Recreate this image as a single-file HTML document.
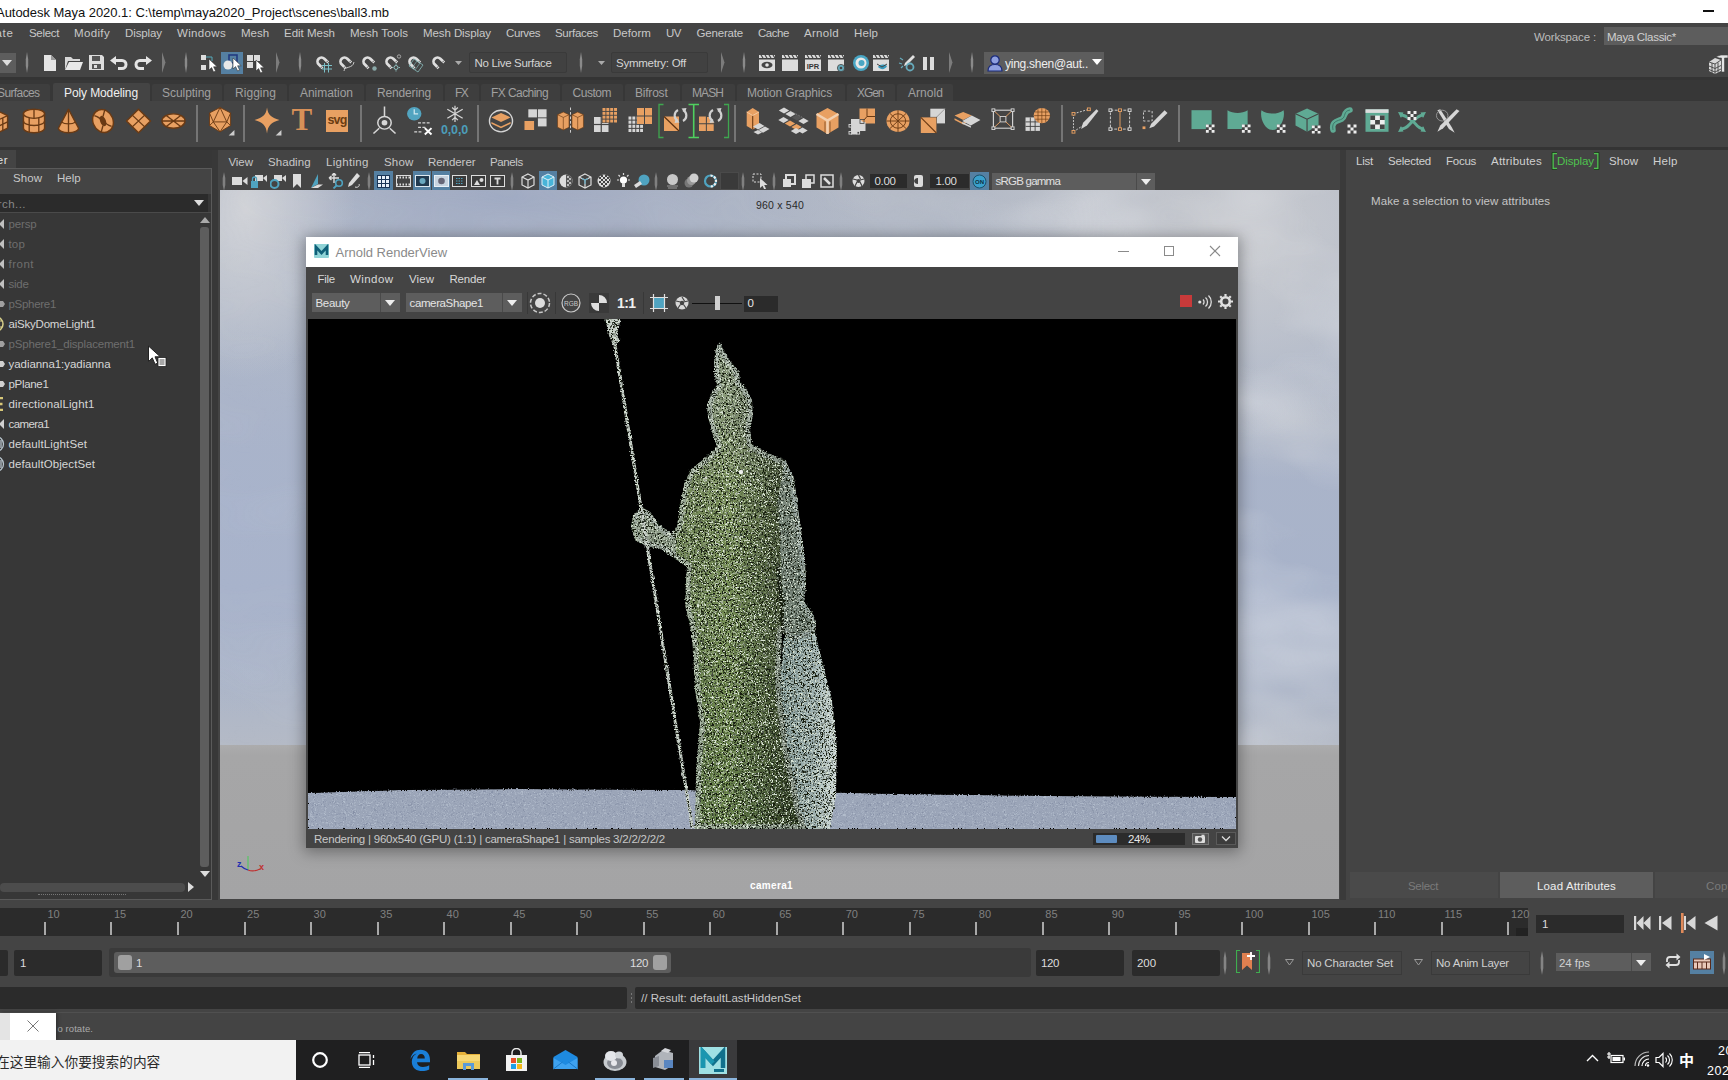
<!DOCTYPE html>
<html><head><meta charset="utf-8"><title>Autodesk Maya 2020.1</title>
<style>
html,body{margin:0;padding:0;}
body{width:1728px;height:1080px;position:relative;overflow:hidden;background:#444;font-family:"Liberation Sans","Noto Sans CJK SC",sans-serif;}
body div,body span,body svg{position:absolute;display:block;}
span{white-space:pre;}
</style></head><body>
<div style="left:0px;top:0px;width:1728px;height:23px;background:#fff;"></div>
<span style="left:-4px;top:3.5px;font-size:13px;line-height:17px;color:#111;letter-spacing:-0.037px;">Autodesk Maya 2020.1: C:\temp\maya2020_Project\scenes\ball3.mb</span>
<div style="left:1703px;top:10px;width:11px;height:1.5px;background:#111;"></div>
<div style="left:0px;top:23px;width:1728px;height:57px;background:#444;"></div>
<span style="left:-25px;top:26.0px;font-size:11.5px;line-height:15px;color:#c8c8c8;letter-spacing:0.664px;">Create</span>
<span style="left:29px;top:26.0px;font-size:11.5px;line-height:15px;color:#c8c8c8;letter-spacing:-0.327px;">Select</span>
<span style="left:74px;top:26.0px;font-size:11.5px;line-height:15px;color:#c8c8c8;letter-spacing:0.355px;">Modify</span>
<span style="left:125px;top:26.0px;font-size:11.5px;line-height:15px;color:#c8c8c8;letter-spacing:-0.101px;">Display</span>
<span style="left:177px;top:26.0px;font-size:11.5px;line-height:15px;color:#c8c8c8;letter-spacing:0.336px;">Windows</span>
<span style="left:241px;top:26.0px;font-size:11.5px;line-height:15px;color:#c8c8c8;letter-spacing:-0.030px;">Mesh</span>
<span style="left:284px;top:26.0px;font-size:11.5px;line-height:15px;color:#c8c8c8;letter-spacing:-0.015px;">Edit Mesh</span>
<span style="left:350px;top:26.0px;font-size:11.5px;line-height:15px;color:#c8c8c8;letter-spacing:0.005px;">Mesh Tools</span>
<span style="left:423px;top:26.0px;font-size:11.5px;line-height:15px;color:#c8c8c8;letter-spacing:-0.085px;">Mesh Display</span>
<span style="left:506px;top:26.0px;font-size:11.5px;line-height:15px;color:#c8c8c8;letter-spacing:-0.404px;">Curves</span>
<span style="left:555px;top:26.0px;font-size:11.5px;line-height:15px;color:#c8c8c8;letter-spacing:-0.298px;">Surfaces</span>
<span style="left:613px;top:26.0px;font-size:11.5px;line-height:15px;color:#c8c8c8;letter-spacing:0.050px;">Deform</span>
<span style="left:666px;top:26.0px;font-size:11.5px;line-height:15px;color:#c8c8c8;letter-spacing:-0.487px;">UV</span>
<span style="left:696.5px;top:26.0px;font-size:11.5px;line-height:15px;color:#c8c8c8;letter-spacing:-0.181px;">Generate</span>
<span style="left:758px;top:26.0px;font-size:11.5px;line-height:15px;color:#c8c8c8;letter-spacing:-0.448px;">Cache</span>
<span style="left:804px;top:26.0px;font-size:11.5px;line-height:15px;color:#c8c8c8;letter-spacing:0.293px;">Arnold</span>
<span style="left:854px;top:26.0px;font-size:11.5px;line-height:15px;color:#c8c8c8;letter-spacing:0.088px;">Help</span>
<span style="left:1534px;top:29.5px;font-size:11.5px;line-height:15px;color:#bbb;letter-spacing:-0.154px;">Workspace :</span>
<div style="left:1604px;top:27px;width:124px;height:18px;background:#5d5d5d;"></div>
<span style="left:1607px;top:29.5px;font-size:11.5px;line-height:15px;color:#d0d0d0;letter-spacing:-0.296px;">Maya Classic*</span>
<div style="left:0px;top:53px;width:16px;height:20px;background:#5d5d5d;"></div>
<svg style="left:2px;top:60px;" width="10" height="6" viewBox="0 0 10 6"><path d="M0 0h10l-5 6z" fill="#ddd"/></svg>
<svg style="left:25px;top:52px;" width="4" height="21" viewBox="0 0 4 21"><path d="M2 0 L3.2 7.35 L3.2 13.65 L2 21 L0.8 13.65 L0.8 7.35z" fill="#8a8a8a"/></svg>
<svg style="left:184px;top:52px;" width="4" height="21" viewBox="0 0 4 21"><path d="M2 0 L3.2 7.35 L3.2 13.65 L2 21 L0.8 13.65 L0.8 7.35z" fill="#8a8a8a"/></svg>
<svg style="left:298px;top:52px;" width="4" height="21" viewBox="0 0 4 21"><path d="M2 0 L3.2 7.35 L3.2 13.65 L2 21 L0.8 13.65 L0.8 7.35z" fill="#8a8a8a"/></svg>
<svg style="left:579px;top:52px;" width="4" height="21" viewBox="0 0 4 21"><path d="M2 0 L3.2 7.35 L3.2 13.65 L2 21 L0.8 13.65 L0.8 7.35z" fill="#8a8a8a"/></svg>
<svg style="left:742px;top:52px;" width="4" height="21" viewBox="0 0 4 21"><path d="M2 0 L3.2 7.35 L3.2 13.65 L2 21 L0.8 13.65 L0.8 7.35z" fill="#8a8a8a"/></svg>
<svg style="left:970px;top:52px;" width="4" height="21" viewBox="0 0 4 21"><path d="M2 0 L3.2 7.35 L3.2 13.65 L2 21 L0.8 13.65 L0.8 7.35z" fill="#8a8a8a"/></svg>
<svg style="left:161px;top:52px;" width="5" height="21" viewBox="0 0 5 21"><path d="M1 0 L4.5 10.5 L1 21 z" fill="#7c7c7c"/></svg>
<svg style="left:275px;top:52px;" width="5" height="21" viewBox="0 0 5 21"><path d="M1 0 L4.5 10.5 L1 21 z" fill="#7c7c7c"/></svg>
<svg style="left:720px;top:52px;" width="5" height="21" viewBox="0 0 5 21"><path d="M1 0 L4.5 10.5 L1 21 z" fill="#7c7c7c"/></svg>
<svg style="left:948px;top:52px;" width="5" height="21" viewBox="0 0 5 21"><path d="M1 0 L4.5 10.5 L1 21 z" fill="#7c7c7c"/></svg>
<svg style="left:44px;top:55px;" width="12" height="16" viewBox="0 0 12 16"><path d="M0 0h7l5 5v11h-12z" fill="#e4e4e4"/><path d="M7 0v5h5z" fill="#999"/></svg>
<svg style="left:65px;top:57px;" width="18" height="13" viewBox="0 0 18 13"><path d="M0 0h6l2 2h7v2h-12l-3 9z" fill="#d8d8d8"/><path d="M4 5h14l-3 8h-15z" fill="#e8e8e8"/></svg>
<svg style="left:89px;top:55px;" width="15" height="15" viewBox="0 0 15 15"><path d="M0 0h13l2 2v13h-15z" fill="#ddd"/><rect x="3" y="1" width="8" height="5" fill="#555"/><rect x="3" y="9" width="9" height="5" fill="#555"/><rect x="5" y="10" width="3" height="3" fill="#ddd"/></svg>
<svg style="left:110px;top:56px;" width="18" height="14" viewBox="0 0 18 14"><path d="M0 4.5L6 0v3h6a5.5 5.5 0 0 1 0 11h-4v-3h4a2.5 2.5 0 0 0 0-5h-6v3z" fill="#e4e4e4"/></svg>
<svg style="left:134px;top:56px;" width="18" height="14" viewBox="0 0 18 14"><path d="M18 4.5L12 0v3h-6a5.5 5.5 0 0 0 0 11h4v-3h-4a2.5 2.5 0 0 1 0-5h6v3z" fill="#e4e4e4"/></svg>
<svg style="left:200px;top:54px;" width="20" height="20" viewBox="0 0 20 20"><rect x="1" y="1" width="5" height="5" fill="#ddd"/><rect x="1" y="11" width="5" height="5" fill="#ddd"/><path d="M6 3h6v4" stroke="#5ab" fill="none"/><path transform="translate(9,5) scale(1.0)" d="M0 0v11l2.6-2.4 2 4.4 2-0.9-2-4.3h3.6z" fill="#fff" stroke="#333" stroke-width="0.6"/></svg>
<div style="left:221px;top:52px;width:22px;height:22px;background:#5580a2;"></div>
<svg style="left:222px;top:53px;" width="20" height="20" viewBox="0 0 20 20"><rect x="7" y="2" width="8" height="8" fill="none" stroke="#223a80" stroke-width="1.6"/><circle cx="6" cy="12" r="4.5" fill="#e8e8e8"/><path transform="translate(11,5) scale(1.0)" d="M0 0v11l2.6-2.4 2 4.4 2-0.9-2-4.3h3.6z" fill="#fff" stroke="#333" stroke-width="0.6"/></svg>
<svg style="left:247px;top:54px;" width="20" height="20" viewBox="0 0 20 20"><rect x="0" y="1" width="6" height="6" fill="#ddd"/><rect x="7" y="1" width="6" height="6" fill="#ddd"/><rect x="0" y="8" width="6" height="6" fill="#ddd"/><path transform="translate(9,6) scale(1.0)" d="M0 0v11l2.6-2.4 2 4.4 2-0.9-2-4.3h3.6z" fill="#fff" stroke="#333" stroke-width="0.6"/></svg>
<svg style="left:314px;top:52px;" width="24" height="24" viewBox="0 0 24 24"><g transform="translate(7.500,9.500) rotate(-45)"><path d="M-4 5.500V0A4 4 0 0 1 4 0V5.500" fill="none" stroke="#dedede" stroke-width="2.700"/><path d="M-5.350 4h2.700M2.650 4h2.700" stroke="#444" stroke-width="0.800"/></g><path d="M8 13.500h10M8 17h10M10.500 11v9.500M14.500 11v9.500" stroke="#7cc0c8" stroke-width="1"/></svg>
<svg style="left:337px;top:52px;" width="24" height="24" viewBox="0 0 24 24"><g transform="translate(7.500,9.500) rotate(-45)"><path d="M-4 5.500V0A4 4 0 0 1 4 0V5.500" fill="none" stroke="#dedede" stroke-width="2.700"/><path d="M-5.350 4h2.700M2.650 4h2.700" stroke="#444" stroke-width="0.800"/></g><path d="M7 19c0-5 9-2 10-9" stroke="#c8c8c8" stroke-width="1" fill="none"/></svg>
<svg style="left:360px;top:52px;" width="24" height="24" viewBox="0 0 24 24"><g transform="translate(7.500,9.500) rotate(-45)"><path d="M-4 5.500V0A4 4 0 0 1 4 0V5.500" fill="none" stroke="#dedede" stroke-width="2.700"/><path d="M-5.350 4h2.700M2.650 4h2.700" stroke="#444" stroke-width="0.800"/></g><circle cx="14.500" cy="16.500" r="2.200" fill="#8aa8a8"/></svg>
<svg style="left:383px;top:52px;" width="24" height="24" viewBox="0 0 24 24"><g transform="translate(7.500,9.500) rotate(-45)"><path d="M-4 5.500V0A4 4 0 0 1 4 0V5.500" fill="none" stroke="#dedede" stroke-width="2.700"/><path d="M-5.350 4h2.700M2.650 4h2.700" stroke="#444" stroke-width="0.800"/></g><circle cx="16" cy="4.500" r="1.700" fill="none" stroke="#bbb" stroke-width="0.800"/><circle cx="13" cy="15.500" r="2" fill="none" stroke="#9cc" stroke-width="0.900"/><path d="M13 11.500v1.300M13 18.200v1.300M9 15.500h1.300M15.700 15.500h1.300" stroke="#9cc" stroke-width="0.800"/></svg>
<svg style="left:406px;top:52px;" width="24" height="24" viewBox="0 0 24 24"><g transform="translate(7.500,9.500) rotate(-45)"><path d="M-4 5.500V0A4 4 0 0 1 4 0V5.500" fill="none" stroke="#dedede" stroke-width="2.700"/><path d="M-5.350 4h2.700M2.650 4h2.700" stroke="#444" stroke-width="0.800"/></g><path d="M8 7l9 6-5 7-9-6z" fill="none" stroke="#8bb" stroke-width="0.800"/><path d="M11 9l-5 7M14 11l-5 7" stroke="#8bb" stroke-width="0.600"/></svg>
<svg style="left:430px;top:52px;" width="24" height="24" viewBox="0 0 24 24"><g transform="translate(7.500,9.500) rotate(-45)"><path d="M-4 5.500V0A4 4 0 0 1 4 0V5.500" fill="none" stroke="#dedede" stroke-width="2.700"/><path d="M-5.350 4h2.700M2.650 4h2.700" stroke="#444" stroke-width="0.800"/></g></svg>
<svg style="left:455px;top:61px;" width="7" height="4" viewBox="0 0 7 4"><path d="M0 0h7l-3.500 4z" fill="#aaa"/></svg>
<div style="left:469px;top:52px;width:98px;height:21px;background:#414141;border:1px solid #3a3a3a;border-radius:2px;box-sizing:border-box;"></div>
<span style="left:474.5px;top:56.0px;font-size:11.5px;line-height:15px;color:#d4d4d4;letter-spacing:-0.321px;">No Live Surface</span>
<svg style="left:598px;top:61px;" width="7" height="4" viewBox="0 0 7 4"><path d="M0 0h7l-3.500 4z" fill="#aaa"/></svg>
<div style="left:611px;top:52px;width:97px;height:21px;background:#414141;border:1px solid #3a3a3a;border-radius:2px;box-sizing:border-box;"></div>
<span style="left:616px;top:56.0px;font-size:11.5px;line-height:15px;color:#d4d4d4;letter-spacing:-0.251px;">Symmetry: Off</span>
<svg style="left:759px;top:54px;" width="18" height="18" viewBox="0 0 18 18"><path d="M0 1h16v3h-16z" fill="#ddd"/><path d="M2 1l2 3M6 1l2 3M10 1l2 3M14 1l2 3" stroke="#444" stroke-width="1.2"/><rect x="0" y="5.500" width="16" height="11.500" fill="#dcdcdc"/><ellipse cx="8" cy="11" rx="5.500" ry="3.2" fill="#444"/><circle cx="8" cy="11" r="1.8" fill="#e4e4e4"/></svg>
<svg style="left:782px;top:54px;" width="18" height="18" viewBox="0 0 18 18"><path d="M0 1h16v3h-16z" fill="#ddd"/><path d="M2 1l2 3M6 1l2 3M10 1l2 3M14 1l2 3" stroke="#444" stroke-width="1.2"/><rect x="0" y="5.500" width="16" height="11.500" fill="#dcdcdc"/></svg>
<svg style="left:805px;top:54px;" width="18" height="18" viewBox="0 0 18 18"><path d="M0 1h16v3h-16z" fill="#ddd"/><path d="M2 1l2 3M6 1l2 3M10 1l2 3M14 1l2 3" stroke="#444" stroke-width="1.2"/><rect x="0" y="5.500" width="16" height="11.500" fill="#dcdcdc"/><text x="8" y="14.5" font-size="7.5" font-weight="700" text-anchor="middle" fill="#333" font-family="Liberation Sans,sans-serif">IPR</text></svg>
<svg style="left:828px;top:54px;" width="18" height="18" viewBox="0 0 18 18"><path d="M0 1h16v3h-16z" fill="#ddd"/><path d="M2 1l2 3M6 1l2 3M10 1l2 3M14 1l2 3" stroke="#444" stroke-width="1.2"/><rect x="0" y="5.500" width="16" height="11.500" fill="#dcdcdc"/><circle cx="13" cy="14" r="3.6" fill="#6ab" stroke="#444" stroke-width="0.8"/><circle cx="13" cy="14" r="1.3" fill="#444"/></svg>
<svg style="left:852px;top:54px;" width="18" height="18" viewBox="0 0 18 18"><circle cx="9" cy="9" r="8" fill="#49a6c4"/><circle cx="9" cy="9" r="5.500" fill="#e8e8e8"/><circle cx="9.5" cy="9" r="3" fill="#49a6c4"/></svg>
<svg style="left:873px;top:54px;" width="18" height="18" viewBox="0 0 18 18"><path d="M0 1h16v3h-16z" fill="#ddd"/><path d="M2 1l2 3M6 1l2 3M10 1l2 3M14 1l2 3" stroke="#444" stroke-width="1.2"/><rect x="0" y="5.500" width="16" height="11.500" fill="#dcdcdc"/><path d="M5 13c2-3 6-3 9-1-2 4-6 4-9 1z" fill="#3a9abc"/><path d="M4 10l5 3 5-3" stroke="#444" fill="none"/></svg>
<svg style="left:898px;top:54px;" width="18" height="18" viewBox="0 0 18 18"><path d="M15 1l2 2-8 8-3 1 1-3z" fill="#e0e0e0"/><circle cx="12" cy="13" r="3.500" fill="none" stroke="#6ab" stroke-width="1.8"/><path d="M1 9l3 1M3 14l2-2M2 4l3 2" stroke="#6ab" stroke-width="1.2"/></svg>
<div style="left:922.5px;top:56.5px;width:4px;height:13px;background:#dcdcdc;"></div>
<div style="left:929.5px;top:56.5px;width:4px;height:13px;background:#dcdcdc;"></div>
<div style="left:984px;top:52px;width:120px;height:22px;background:#5d5d5d;"></div>
<svg style="left:987px;top:54px;" width="16" height="18" viewBox="0 0 16 18"><circle cx="8" cy="6" r="4.2" fill="#8fa0e0" stroke="#1a2a7a" stroke-width="1.2"/><path d="M1 17c0-5 3.500-6.500 7-6.500s7 1.500 7 6.500z" fill="#8fa0e0" stroke="#1a2a7a" stroke-width="1.2"/></svg>
<span style="left:1005px;top:56.0px;font-size:12px;line-height:16px;color:#eee;letter-spacing:-0.260px;">ying.shen@aut..</span>
<svg style="left:1092px;top:59px;" width="10" height="6" viewBox="0 0 10 6"><path d="M0 0h10l-5 6z" fill="#fff"/></svg>
<svg style="left:1706px;top:53px;" width="22" height="22" viewBox="0 0 22 22"><path d="M3 9l6-4 6 2v11l-6 3-6-3z" fill="#d8d8d8"/><path d="M3 9l6 2 6-4M9 11v10M3 13l6 2.500 6-3M3 16.500l6 2.500 6-3M6 10v10M12 9.500v10" stroke="#444" stroke-width="0.900" fill="none"/><path d="M10 3.500l5-1.500h7v3h-3.500v14h-3v-14h-2.500z" fill="#e4e4e4" stroke="#444" stroke-width="0.600"/></svg>
<div style="left:0px;top:77px;width:1728px;height:3px;background:#343434;"></div>
<div style="left:0px;top:80px;width:1728px;height:21px;background:#373737;"></div>
<div style="left:-30px;top:84px;width:80px;height:17px;background:#3e3e3e;border-radius:2px 2px 0 0;"></div>
<span style="left:-3px;top:85.0px;font-size:12px;line-height:16px;color:#a0a0a0;letter-spacing:-0.607px;">Surfaces</span>
<div style="left:53px;top:83px;width:97px;height:18px;background:#444;border-radius:2px 2px 0 0;"></div>
<span style="left:64px;top:85.0px;font-size:12px;line-height:16px;color:#f0f0f0;letter-spacing:-0.106px;">Poly Modeling</span>
<div style="left:152px;top:84px;width:70px;height:17px;background:#3e3e3e;border-radius:2px 2px 0 0;"></div>
<span style="left:162px;top:85.0px;font-size:12px;line-height:16px;color:#a0a0a0;letter-spacing:-0.040px;">Sculpting</span>
<div style="left:224px;top:84px;width:63px;height:17px;background:#3e3e3e;border-radius:2px 2px 0 0;"></div>
<span style="left:235px;top:85.0px;font-size:12px;line-height:16px;color:#a0a0a0;letter-spacing:0.044px;">Rigging</span>
<div style="left:289px;top:84px;width:75px;height:17px;background:#3e3e3e;border-radius:2px 2px 0 0;"></div>
<span style="left:300px;top:85.0px;font-size:12px;line-height:16px;color:#a0a0a0;letter-spacing:-0.040px;">Animation</span>
<div style="left:366px;top:84px;width:77px;height:17px;background:#3e3e3e;border-radius:2px 2px 0 0;"></div>
<span style="left:377px;top:85.0px;font-size:12px;line-height:16px;color:#a0a0a0;letter-spacing:-0.152px;">Rendering</span>
<div style="left:445px;top:84px;width:34px;height:17px;background:#3e3e3e;border-radius:2px 2px 0 0;"></div>
<span style="left:455px;top:85.0px;font-size:12px;line-height:16px;color:#a0a0a0;letter-spacing:-1.667px;">FX</span>
<div style="left:481px;top:84px;width:79px;height:17px;background:#3e3e3e;border-radius:2px 2px 0 0;"></div>
<span style="left:491px;top:85.0px;font-size:12px;line-height:16px;color:#a0a0a0;letter-spacing:-0.569px;">FX Caching</span>
<div style="left:562px;top:84px;width:61px;height:17px;background:#3e3e3e;border-radius:2px 2px 0 0;"></div>
<span style="left:572.5px;top:85.0px;font-size:12px;line-height:16px;color:#a0a0a0;letter-spacing:-0.474px;">Custom</span>
<div style="left:625px;top:84px;width:55px;height:17px;background:#3e3e3e;border-radius:2px 2px 0 0;"></div>
<span style="left:635px;top:85.0px;font-size:12px;line-height:16px;color:#a0a0a0;letter-spacing:-0.216px;">Bifrost</span>
<div style="left:682px;top:84px;width:53px;height:17px;background:#3e3e3e;border-radius:2px 2px 0 0;"></div>
<span style="left:692px;top:85.0px;font-size:12px;line-height:16px;color:#a0a0a0;letter-spacing:-0.918px;">MASH</span>
<div style="left:737px;top:84px;width:108px;height:17px;background:#3e3e3e;border-radius:2px 2px 0 0;"></div>
<span style="left:747px;top:85.0px;font-size:12px;line-height:16px;color:#a0a0a0;letter-spacing:-0.158px;">Motion Graphics</span>
<div style="left:847px;top:84px;width:48px;height:17px;background:#3e3e3e;border-radius:2px 2px 0 0;"></div>
<span style="left:857px;top:85.0px;font-size:12px;line-height:16px;color:#a0a0a0;letter-spacing:-1.046px;">XGen</span>
<div style="left:897px;top:84px;width:56px;height:17px;background:#3e3e3e;border-radius:2px 2px 0 0;"></div>
<span style="left:908px;top:85.0px;font-size:12px;line-height:16px;color:#a0a0a0;letter-spacing:0.052px;">Arnold</span>
<div style="left:0px;top:101px;width:1728px;height:49px;background:#444;"></div>
<div style="left:0px;top:146.5px;width:1728px;height:3px;background:#343434;"></div>
<div style="left:196px;top:105px;width:2px;height:37px;background:#757575;"></div>
<div style="left:243px;top:105px;width:2px;height:37px;background:#757575;"></div>
<div style="left:360px;top:105px;width:2px;height:37px;background:#757575;"></div>
<div style="left:477px;top:105px;width:2px;height:37px;background:#757575;"></div>
<div style="left:734px;top:105px;width:2px;height:37px;background:#757575;"></div>
<div style="left:1061px;top:105px;width:2px;height:37px;background:#757575;"></div>
<div style="left:1178px;top:105px;width:2px;height:37px;background:#757575;"></div>
<svg style="left:-14px;top:104px;" width="24" height="36" viewBox="0 0 24 36"><g transform="translate(12.0,17) scale(0.96,0.9) translate(-12.0,-18)"><path d="M2 12l10-5 10 5v14l-10 5-10-5z" fill="#e8a062" stroke="#6a3a14" stroke-width="1.500" stroke-linejoin="round"/><path d="M2 12l10 5 10-5M12 17v14M7 14.500v14M17 14.500v14M2 19l10 5 10-5" stroke="#6a3a14" fill="none" stroke-width="1.400"/></g></svg>
<svg style="left:22px;top:104px;" width="24" height="36" viewBox="0 0 24 36"><g transform="translate(12.0,17) scale(0.96,0.9) translate(-12.0,-18)"><path d="M1 10a11 5 0 0 1 22 0v16a11 5 0 0 1-22 0z" fill="#e8a062" stroke="#6a3a14" stroke-width="1.500" stroke-linejoin="round"/><ellipse cx="12" cy="10" rx="11" ry="5" fill="#e8a062" stroke="#6a3a14" stroke-width="1.500" stroke-linejoin="round" stroke="#6a3a14"/><path d="M1 18a11 5 0 0 0 22 0M7 14.500v16M17 14.500v16M12 5v10" stroke="#6a3a14" fill="none" stroke-width="1.400"/></g></svg>
<svg style="left:57px;top:104px;" width="23" height="36" viewBox="0 0 23 36"><g transform="translate(11.5,17) scale(0.96,0.9) translate(-11.5,-18)"><path d="M11.500 5 L22 26a10.500 5 0 0 1-21 0z" fill="#e8a062" stroke="#6a3a14" stroke-width="1.500" stroke-linejoin="round"/><path d="M11.500 5v26M4 19c4 3 11 3 15 0" stroke="#6a3a14" fill="none" stroke-width="1.400"/></g></svg>
<svg style="left:91px;top:104px;" width="24" height="36" viewBox="0 0 24 36"><g transform="translate(12.0,17) scale(0.96,0.9) translate(-12.0,-18)"><ellipse cx="12" cy="18" rx="10.500" ry="13" fill="#e8a062" stroke="#6a3a14" stroke-width="1.500" stroke-linejoin="round" transform="rotate(-20 12 18)"/><ellipse cx="12" cy="18" rx="3" ry="6" fill="#6a3a14" transform="rotate(-20 12 18)"/><path d="M3 12c6 2 8 6 8 6M21 24c-6-2-8-6-8-6M14 5c-1 4-2 8-2 8M10 31c1-4 2-8 2-8" stroke="#6a3a14" fill="none" stroke-width="1.400"/></g></svg>
<svg style="left:125px;top:104px;" width="27" height="36" viewBox="0 0 27 36"><g transform="translate(13.5,17) scale(0.96,0.9) translate(-13.5,-18)"><path d="M13.500 5L26 18 13.500 31 1 18z" fill="#e8a062" stroke="#6a3a14" stroke-width="1.500" stroke-linejoin="round"/><path d="M7 11.500l13 13M20 11.500l-13 13" stroke="#6a3a14" fill="none" stroke-width="1.400"/></g></svg>
<svg style="left:161px;top:104px;" width="25" height="36" viewBox="0 0 25 36"><g transform="translate(12.5,17) scale(0.96,0.9) translate(-12.5,-18)"><ellipse cx="12.500" cy="18" rx="12" ry="8" fill="#e8a062" stroke="#6a3a14" stroke-width="1.500" stroke-linejoin="round"/><path d="M0.500 18h24M5 12l15 12M20 12l-15 12" stroke="#6a3a14" fill="none" stroke-width="1.400"/></g></svg>
<svg style="left:207px;top:104px;" width="28" height="36" viewBox="0 0 28 36"><g transform="translate(14.0,17) scale(0.96,0.9) translate(-14.0,-18)"><path d="M13 3l11 6v14l-11 7-11-7v-14z" fill="#e8a062" stroke="#6a3a14"/><path d="M13 3l-7 16h14zM2 9l4 10M24 9l-4 10M6 19l7 11 7-11M2 23l4-4M24 23l-4-4" stroke="#6a3a14" fill="none"/><path d="M28 28v6h-6z" fill="#ccc"/></g></svg>
<svg style="left:253px;top:104px;" width="29" height="36" viewBox="0 0 29 36"><g transform="translate(14.5,17) scale(0.96,0.9) translate(-14.5,-18)"><path d="M14 3c1 8 4 11 13 14-9 3-12 6-13 15-1-9-4-12-13-15 9-3 12-6 13-14z" fill="#e8a062"/><path d="M29 28v6h-6z" fill="#ccc"/></g></svg>
<span style="left:291.500px;top:100px;font-family:'Liberation Serif',serif;font-size:31px;line-height:40px;font-weight:700;color:#d89058;">T</span>
<div style="left:325.5px;top:109.5px;width:22.5px;height:22.5px;background:#e8a062;"></div>
<span style="left:327.5px;top:112.0px;font-size:12.5px;line-height:16px;color:#6b3d12;letter-spacing:-0.846px;font-weight:700;">svg</span>
<svg style="left:371px;top:104px;" width="27" height="36" viewBox="0 0 27 36"><g transform="translate(13.5,17) scale(0.96,0.9) translate(-13.5,-18)"><circle cx="13.500" cy="20" r="7" fill="none" stroke="#d6d6d6" stroke-width="1.600"/><circle cx="13.500" cy="20" r="3" fill="#d6d6d6"/><path d="M13.500 2v11M2 32l6-6M25 32l-6-6" stroke="#d6d6d6" stroke-width="1.600"/></g></svg>
<svg style="left:406px;top:104px;" width="28" height="36" viewBox="0 0 28 36"><g transform="translate(14.0,17) scale(0.96,0.9) translate(-14.0,-18)"><circle cx="8" cy="10" r="7.500" fill="#52a4c0"/><path d="M8 5v5h4" stroke="#cfe8f0" fill="none" stroke-width="1.300"/><path d="M12 20h12M12 25h8M8 30h8" stroke="#d6d6d6" stroke-width="1.400" stroke-dasharray="3 1.500"/><path d="M19 26l7 7M26 26l-7 7" stroke="#fff" stroke-width="2"/></g></svg>
<svg style="left:441px;top:104px;" width="28" height="36" viewBox="0 0 28 36"><g transform="translate(14.0,17) scale(0.96,0.9) translate(-14.0,-18)"><path d="M14 1v18M6 5l16 10M22 5l-16 10M11 3l3 3 3-3M11 17l3-3 3 3" stroke="#d6d6d6" stroke-width="1.300" fill="none"/></g></svg>
<span style="left:441px;top:121.5px;font-size:12.5px;line-height:16px;color:#4c9dba;letter-spacing:-0.160px;font-weight:700;">0,0,0</span>
<svg style="left:488px;top:104px;" width="26" height="36" viewBox="0 0 26 36"><g transform="translate(13.0,17) scale(0.96,0.9) translate(-13.0,-18)"><circle cx="13" cy="18" r="12" fill="none" stroke="#d6d6d6" stroke-width="1.500"/><path d="M13 9l10 5-10 5-10-5z" fill="#e8a062"/><path d="M3 19l10 5 10-5v2l-10 5-10-5z" fill="#e8a062"/></g></svg>
<svg style="left:524px;top:104px;" width="24" height="36" viewBox="0 0 24 36"><g transform="translate(12.0,17) scale(0.96,0.9) translate(-12.0,-18)"><rect x="4" y="5" width="9" height="9" fill="#d6d6d6"/><rect x="14" y="5" width="9" height="9" fill="#d6d6d6"/><rect x="14" y="15" width="9" height="9" fill="#d6d6d6"/><rect x="0" y="18" width="10" height="10" fill="#e8a062"/></g></svg>
<svg style="left:556px;top:104px;" width="29" height="36" viewBox="0 0 29 36"><g transform="translate(14.5,17) scale(0.96,0.9) translate(-14.5,-18)"><path d="M1 11l6-3 6 3v14l-6 3-6-3z" fill="#e8a062" stroke="#6a3a14" stroke-width="0.700"/><path d="M16 11l6-3 6 3v14l-6 3-6-3z" fill="#e8a062" stroke="#6a3a14" stroke-width="0.700"/><path d="M7 14v14M22 14v14M1 11l6 3 6-3M16 11l6 3 6-3" stroke="#6a3a14" stroke-width="0.700" fill="none"/><path d="M14.500 3v30" stroke="#d6d6d6" stroke-dasharray="3 2"/></g></svg>
<svg style="left:592px;top:102px;" width="28" height="42" viewBox="592 102 28 42"><rect x="594.00" y="117.00" width="6.65" height="6.90" fill="#d6d6d6"/><rect x="594.00" y="125.10" width="6.65" height="6.90" fill="#d6d6d6"/><rect x="601.85" y="117.00" width="6.65" height="6.90" fill="#d6d6d6"/><rect x="601.85" y="125.10" width="6.65" height="6.90" fill="#d6d6d6"/><rect x="602" y="107.500" width="15.500" height="15.500" fill="#444"/><rect x="602.50" y="108.00" width="2.95" height="2.95" fill="#e8a062"/><rect x="602.50" y="111.85" width="2.95" height="2.95" fill="#e8a062"/><rect x="602.50" y="115.70" width="2.95" height="2.95" fill="#e8a062"/><rect x="602.50" y="119.55" width="2.95" height="2.95" fill="#e8a062"/><rect x="606.35" y="108.00" width="2.95" height="2.95" fill="#e8a062"/><rect x="606.35" y="111.85" width="2.95" height="2.95" fill="#e8a062"/><rect x="606.35" y="115.70" width="2.95" height="2.95" fill="#e8a062"/><rect x="606.35" y="119.55" width="2.95" height="2.95" fill="#e8a062"/><rect x="610.20" y="108.00" width="2.95" height="2.95" fill="#e8a062"/><rect x="610.20" y="111.85" width="2.95" height="2.95" fill="#e8a062"/><rect x="610.20" y="115.70" width="2.95" height="2.95" fill="#e8a062"/><rect x="610.20" y="119.55" width="2.95" height="2.95" fill="#e8a062"/><rect x="614.05" y="108.00" width="2.95" height="2.95" fill="#e8a062"/><rect x="614.05" y="111.85" width="2.95" height="2.95" fill="#e8a062"/><rect x="614.05" y="115.70" width="2.95" height="2.95" fill="#e8a062"/><rect x="614.05" y="119.55" width="2.95" height="2.95" fill="#e8a062"/></svg>
<svg style="left:626px;top:102px;" width="29" height="42" viewBox="626 102 29 42"><rect x="628.50" y="116.50" width="2.88" height="3.12" fill="#d6d6d6"/><rect x="628.50" y="120.62" width="2.88" height="3.12" fill="#d6d6d6"/><rect x="628.50" y="124.75" width="2.88" height="3.12" fill="#d6d6d6"/><rect x="628.50" y="128.88" width="2.88" height="3.12" fill="#d6d6d6"/><rect x="632.38" y="116.50" width="2.88" height="3.12" fill="#d6d6d6"/><rect x="632.38" y="120.62" width="2.88" height="3.12" fill="#d6d6d6"/><rect x="632.38" y="124.75" width="2.88" height="3.12" fill="#d6d6d6"/><rect x="632.38" y="128.88" width="2.88" height="3.12" fill="#d6d6d6"/><rect x="636.25" y="116.50" width="2.88" height="3.12" fill="#d6d6d6"/><rect x="636.25" y="120.62" width="2.88" height="3.12" fill="#d6d6d6"/><rect x="636.25" y="124.75" width="2.88" height="3.12" fill="#d6d6d6"/><rect x="636.25" y="128.88" width="2.88" height="3.12" fill="#d6d6d6"/><rect x="640.12" y="116.50" width="2.88" height="3.12" fill="#d6d6d6"/><rect x="640.12" y="120.62" width="2.88" height="3.12" fill="#d6d6d6"/><rect x="640.12" y="124.75" width="2.88" height="3.12" fill="#d6d6d6"/><rect x="640.12" y="128.88" width="2.88" height="3.12" fill="#d6d6d6"/><rect x="636.500" y="107.500" width="16" height="17" fill="#444"/><rect x="637.00" y="108.00" width="7.00" height="7.50" fill="#e8a062"/><rect x="637.00" y="116.50" width="7.00" height="7.50" fill="#e8a062"/><rect x="645.00" y="108.00" width="7.00" height="7.50" fill="#e8a062"/><rect x="645.00" y="116.50" width="7.00" height="7.50" fill="#e8a062"/></svg>
<svg style="left:656px;top:102px;" width="76" height="42" viewBox="656 102 76 42"><path d="M663.500 104.500h-4.500v33h4.500" stroke="#3fa64f" fill="none" stroke-width="1.300"/><path d="M724 104.500h4.500v33h-4.500" stroke="#3fa64f" fill="none" stroke-width="1.300"/><path d="M688.500 104.500h10.500M688.500 137.500h10.500M693.700 104.500v33" stroke="#4fd05f" fill="none" stroke-width="1.600"/><rect x="664" y="116.500" width="15" height="14.500" fill="#e8a062"/><path d="M664 116.500l15 14.500" stroke="#5a3010" stroke-width="1.200"/><g transform="translate(680.5,115.5)" fill="none" stroke="#d0d0d0" stroke-width="2.200"><path d="M-2.500 -5.500A6.200 6.200 0 0 0 -2.500 5.500"/><path d="M2.500 5.500A6.200 6.200 0 0 0 2.500 -5.500"/></g><path d="M676.0 118.0l3.500 4.500-5 0.500zM685.0 113.0l-3.500 -4.500 5 -0.500z" fill="#d0d0d0"/><rect x="699.00" y="116.50" width="6.85" height="6.75" fill="#e8a062"/><rect x="699.00" y="124.25" width="6.85" height="6.75" fill="#e8a062"/><rect x="706.85" y="116.50" width="6.85" height="6.75" fill="#e8a062"/><rect x="706.85" y="124.25" width="6.85" height="6.75" fill="#e8a062"/><rect x="706.500" y="108" width="12" height="14" fill="#444"/><rect x="707" y="117" width="3" height="5.500" fill="#e8a062"/><g transform="translate(715.5,115.5)" fill="none" stroke="#d0d0d0" stroke-width="2.200"><path d="M-2.500 -5.500A6.200 6.200 0 0 0 -2.500 5.500"/><path d="M2.500 5.500A6.200 6.200 0 0 0 2.500 -5.500"/></g><path d="M711.0 118.0l3.500 4.500-5 0.500zM720.0 113.0l-3.500 -4.500 5 -0.500z" fill="#d0d0d0"/></svg>
<svg style="left:744px;top:102px;" width="28" height="42" viewBox="744 102 28 42"><path d="M746.700 112l6-4 6.300 4v14l-6.300 3.500-6-3.500z" fill="#e8a062"/><path d="M752.700 115.500v14" stroke="#6a3a14" stroke-width="1.100"/><path d="M746.700 112l6 3.500 6.300-3.500" stroke="#f4c8a0" stroke-width="1" fill="none"/><path d="M759.500 123l5 3-6.500 3.500-5-3z" fill="#d6d6d6"/><path d="M765 126.500l4.500 2.500-6.500 3.800-4.500-2.800z" fill="#d6d6d6"/><path d="M758 130l4 2.500-4 2-4.500-2.500z" fill="#d6d6d6"/></svg>
<svg style="left:776px;top:102px;" width="34" height="42" viewBox="776 102 34 42"><path d="M784 107.6l5.2 2.9-5.2 2.9-5.2-2.9z" fill="#d6d6d6"/><path d="M790.5 111.1l5.2 2.9-5.2 2.9-5.2-2.9z" fill="#d6d6d6"/><path d="M783.5 117.1l5.2 2.9-5.2 2.9-5.2-2.9z" fill="#d6d6d6"/><path d="M797 114.6l5.2 2.9-5.2 2.9-5.2-2.9z" fill="#555"/><path d="M790 120.6l5.2 2.9-5.2 2.9-5.2-2.9z" fill="#e8a062"/><path d="M796.5 124.1l5.2 2.9-5.2 2.9-5.2-2.9z" fill="#e8a062"/><path d="M803.5 118.1l5.2 2.9-5.2 2.9-5.2-2.9z" fill="#d6d6d6"/><path d="M796 128.1l5.2 2.9-5.2 2.9-5.2-2.9z" fill="#d6d6d6"/><path d="M802.5 127.6l5.2 2.9-5.2 2.9-5.2-2.9z" fill="#d6d6d6"/><path d="M790.500 111l13 7" stroke="#888" stroke-width="0.800" stroke-dasharray="1.500 1.500"/></svg>
<svg style="left:814px;top:102px;" width="28" height="42" viewBox="814 102 28 42"><path d="M827.500 108l11 6v13.500l-11 6.500-11-6.500v-13.500z" fill="#e8a062"/><path d="M816.500 114l11 6.500 11-6.500M827.500 120.500v13.500" stroke="#f2d0b0" stroke-width="2.600" fill="none"/><path d="M825 121.500v11M830 121.500v11" stroke="#6a3a14" stroke-width="0.700"/></svg>
<svg style="left:846px;top:102px;" width="32" height="42" viewBox="846 102 32 42"><rect x="859.500" y="108.500" width="15.500" height="15" fill="#e8a062"/><path d="M867 108.500v8h8M867 116.500l-3 3.500" stroke="#6a3a14" stroke-width="1" fill="none"/><path d="M851 119h9l3 3h2.500v9h-8.500v3.500h-6z" fill="#d6d6d6"/><rect x="860" y="119.500" width="4" height="4" fill="none" stroke="#444" stroke-width="0.800"/><g fill="#444" stroke="#d6d6d6" stroke-width="0.900"><rect x="849" y="124.500" width="2.600" height="2.600"/><rect x="849" y="131.500" width="2.600" height="2.600"/><rect x="857" y="131.500" width="2.600" height="2.600"/></g></svg>
<svg style="left:885px;top:104px;" width="26" height="36" viewBox="0 0 26 36"><g transform="translate(13.0,17) scale(0.96,0.9) translate(-13.0,-18)"><circle cx="13" cy="18" r="12" fill="#e8a062"/><circle cx="13" cy="18" r="8" fill="none" stroke="#6a3a14"/><path d="M13 6v24M1 18h24M4.500 9.500l17 17M21.500 9.500l-17 17" stroke="#6a3a14"/></g></svg>
<svg style="left:918px;top:102px;" width="30" height="42" viewBox="918 102 30 42"><rect x="930.300" y="108.700" width="14.700" height="14.700" fill="#d6d6d6"/><path d="M930.300 123.400l14.700-14.700" stroke="#888" stroke-width="0.800"/><rect x="920.300" y="116.900" width="16.600" height="16.600" fill="#444"/><rect x="920.800" y="117.400" width="15.600" height="15.600" fill="#e8a062"/><path d="M920.800 117.400l15.600 15.600" stroke="#6a3a14" stroke-width="1.100"/></svg>
<svg style="left:953px;top:104px;" width="29" height="36" viewBox="0 0 29 36"><g transform="translate(14.5,17) scale(0.96,0.9) translate(-14.5,-18)"><path d="M10 8l9 4-9 5-9-5z" fill="#e8a062"/><path d="M1 15l9 5 9-5v2l-9 5-9-5z" fill="#e8a062"/><path d="M19 12l9 5-10 6-9-5z" fill="#d6d6d6"/><path d="M9 19l9 4.500v2l-9-4.500z" fill="#d6d6d6"/></g></svg>
<svg style="left:991px;top:104px;" width="24" height="36" viewBox="0 0 24 36"><g transform="translate(12.0,17) scale(0.96,0.9) translate(-12.0,-18)"><rect x="2" y="6" width="20" height="20" fill="none" stroke="#d6d6d6" stroke-width="1.200"/><rect x="9" y="13" width="6" height="6" fill="none" stroke="#d6d6d6"/><path d="M2 6l7 7M22 6l-7 7M2 26l7-7M22 26l-7-7" stroke="#e8a062"/><g fill="#444" stroke="#d6d6d6"><rect x="0.500" y="4.500" width="3" height="3"/><rect x="20.500" y="4.500" width="3" height="3"/><rect x="0.500" y="24.500" width="3" height="3"/><rect x="20.500" y="24.500" width="3" height="3"/></g></g></svg>
<svg style="left:1025px;top:104px;" width="26" height="36" viewBox="0 0 26 36"><g transform="translate(13.0,17) scale(0.96,0.9) translate(-13.0,-18)"><rect x="0" y="14" width="15" height="15" fill="#d6d6d6"/><path d="M0 19h15M0 24h15M5 14v15M10 14v15" stroke="#444"/><circle cx="17" cy="12" r="8.500" fill="#e8a062"/><path d="M9 12h17M17 3.500v17M13 5v14M21 5v14M10 8h14M10 16h14" stroke="#6a3a14" stroke-width="0.700"/></g></svg>
<svg style="left:1071px;top:104px;" width="28" height="36" viewBox="0 0 28 36"><g transform="translate(14.0,17) scale(0.96,0.9) translate(-14.0,-18)"><path d="M2 10l16-5M2 10v20M2 30l10-7" stroke="#d6d6d6" fill="none" stroke-dasharray="2 1.500"/><path d="M26 5l2 2-12 16-6 4 2-7z" fill="#d6d6d6"/><g fill="#444" stroke="#e8a062"><rect x="0.500" y="8.500" width="3" height="3"/><rect x="16.500" y="3.500" width="3" height="3"/><rect x="0.500" y="28.500" width="3" height="3"/></g></g></svg>
<svg style="left:1108px;top:104px;" width="24" height="36" viewBox="0 0 24 36"><g transform="translate(12.0,17) scale(0.96,0.9) translate(-12.0,-18)"><rect x="2" y="6" width="20" height="21" fill="none" stroke="#d6d6d6" stroke-dasharray="3 1.500"/><path d="M12 6v21" stroke="#e8a062"/><g fill="#444" stroke="#d6d6d6"><rect x="0.500" y="4.500" width="3" height="3"/><rect x="20.500" y="4.500" width="3" height="3"/><rect x="0.500" y="25.500" width="3" height="3"/><rect x="20.500" y="25.500" width="3" height="3"/></g><g fill="#444" stroke="#e8a062"><rect x="10.500" y="4.500" width="3" height="3"/><rect x="10.500" y="25.500" width="3" height="3"/></g></g></svg>
<svg style="left:1141px;top:104px;" width="29" height="36" viewBox="0 0 29 36"><g transform="translate(14.5,17) scale(0.96,0.9) translate(-14.5,-18)"><path d="M2 7h9v11h-9z" fill="none" stroke="#d6d6d6" stroke-dasharray="2.500 2"/><path d="M24 6l3 3-14 15-5 2 2-5z" fill="#d6d6d6"/><rect x="1" y="24" width="3" height="3" fill="#e8a062"/></g></svg>
<svg style="left:1190px;top:104px;" width="26" height="36" viewBox="0 0 26 36"><g transform="translate(13.0,17) scale(0.96,0.9) translate(-13.0,-18)"><rect x="1" y="6" width="21" height="21" fill="#5faa94"/><g transform="translate(16,22)"><rect width="9" height="9" fill="#444"/><path d="M0 0h3v3h-3zM6 0h3v3h-3zM3 3h3v3h-3zM0 6h3v3h-3zM6 6h3v3h-3z" fill="#eee"/></g></g></svg>
<svg style="left:1226px;top:104px;" width="26" height="36" viewBox="0 0 26 36"><g transform="translate(13.0,17) scale(0.96,0.9) translate(-13.0,-18)"><path d="M1 6c6 4 15 4 21 0v21h-21z" fill="#5faa94"/><g transform="translate(16,22)"><rect width="9" height="9" fill="#444"/><path d="M0 0h3v3h-3zM6 0h3v3h-3zM3 3h3v3h-3zM0 6h3v3h-3zM6 6h3v3h-3z" fill="#eee"/></g></g></svg>
<svg style="left:1259px;top:104px;" width="28" height="36" viewBox="0 0 28 36"><g transform="translate(14.0,17) scale(0.96,0.9) translate(-14.0,-18)"><path d="M2 6c6 5 17 5 23 0c2 8-3 22-11.500 22s-13.500-14-11.500-22z" fill="#5faa94"/><g transform="translate(18,22)"><rect width="9" height="9" fill="#444"/><path d="M0 0h3v3h-3zM6 0h3v3h-3zM3 3h3v3h-3zM0 6h3v3h-3zM6 6h3v3h-3z" fill="#eee"/></g></g></svg>
<svg style="left:1294px;top:104px;" width="28" height="36" viewBox="0 0 28 36"><g transform="translate(14.0,17) scale(0.96,0.9) translate(-14.0,-18)"><path d="M13 4l12 6v13l-12 7-12-7v-13z" fill="#5faa94"/><path d="M1 10l12 6 12-6M13 16v14" stroke="#444" stroke-width="1.200" fill="none"/><g transform="translate(18,23)"><rect width="9" height="9" fill="#444"/><path d="M0 0h3v3h-3zM6 0h3v3h-3zM3 3h3v3h-3zM0 6h3v3h-3zM6 6h3v3h-3z" fill="#eee"/></g></g></svg>
<svg style="left:1328px;top:102px;" width="32" height="42" viewBox="1328 102 32 42"><path d="M1333 130c-2-9 5-9 9-11s1-8 8-9" stroke="#5faa94" stroke-width="5.500" fill="none" stroke-linecap="round"/><path d="M1333 130c-2-9 5-9 9-11s1-8 8-9" stroke="#3c7a6a" stroke-width="1" fill="none"/><g transform="translate(1347.5,124.5)"><rect width="9" height="9" fill="#444"/><path d="M0 0h3v3h-3zM6 0h3v3h-3zM3 3h3v3h-3zM0 6h3v3h-3zM6 6h3v3h-3z" fill="#eee"/></g></svg>
<svg style="left:1365px;top:104px;" width="25" height="36" viewBox="0 0 25 36"><g transform="translate(12.5,17) scale(0.96,0.9) translate(-12.5,-18)"><rect x="0" y="5" width="24" height="25" fill="#5faa94"/><rect x="0" y="5" width="24" height="4" fill="#ddd"/><g transform="translate(5,12)"><rect width="15" height="15" fill="#eee"/><path d="M0 0h5v5h-5zM10 0h5v5h-5zM5 5h5v5h-5zM0 10h5v5h-5zM10 10h5v5h-5z" fill="#444"/></g></g></svg>
<svg style="left:1396px;top:102px;" width="32" height="42" viewBox="1396 102 32 42"><path d="M1400 115c8 0 9 5 12 6s4-6 12-6M1400 129c8 0 9-5 12-7s4 7 12 7" stroke="#5faa94" stroke-width="3" fill="none"/><path d="M1398 112l5.500 0.500-2.500 5.500zM1426 112l-5.500 0.500 2.500 5.500zM1398 132l5.500-0.500-2.500-5.500zM1426 132l-5.500-0.500 2.500-5.500z" fill="#5faa94"/><g transform="translate(1407.5,111)"><rect width="9" height="9" fill="#444"/><path d="M0 0h3v3h-3zM6 0h3v3h-3zM3 3h3v3h-3zM0 6h3v3h-3zM6 6h3v3h-3z" fill="#eee"/></g></svg>
<svg style="left:1433px;top:104px;" width="28" height="36" viewBox="0 0 28 36"><g transform="translate(14.0,17) scale(0.96,0.9) translate(-14.0,-18)"><path d="M24 5l3 2-17 19-6 4 3-7z" fill="#d6d6d6"/><path d="M4 6l3-1 12 20 3 6-6-4z" fill="#d6d6d6"/><circle cx="9" cy="12" r="6" fill="none" stroke="#999"/></g></svg>
<div style="left:0px;top:150px;width:212px;height:750px;background:#373737;"></div>
<div style="left:0px;top:150px;width:16px;height:18px;background:#444;"></div>
<span style="left:-36px;top:152.5px;font-size:11.5px;line-height:15px;color:#e0e0e0;letter-spacing:0.467px;">Outliner</span>
<div style="left:0px;top:168px;width:212px;height:1px;background:#5a5a5a;"></div>
<div style="left:0px;top:169px;width:211px;height:25px;background:#444;"></div>
<div style="left:211px;top:168px;width:1px;height:732px;background:#5a5a5a;"></div>
<div style="left:0px;top:899px;width:212px;height:1px;background:#5a5a5a;"></div>
<span style="left:13px;top:171.0px;font-size:11.5px;line-height:15px;color:#c8c8c8;letter-spacing:0.059px;">Show</span>
<span style="left:57px;top:171.0px;font-size:11.5px;line-height:15px;color:#c8c8c8;letter-spacing:-0.037px;">Help</span>
<div style="left:0px;top:194px;width:208px;height:18px;background:#2b2b2b;"></div>
<span style="left:-24px;top:196.5px;font-size:11.5px;line-height:15px;color:#888;letter-spacing:0.442px;">Search...</span>
<svg style="left:194px;top:200px;" width="10" height="6" viewBox="0 0 10 6"><path d="M0 0h10l-5 6z" fill="#ddd"/></svg>
<div style="left:0px;top:212px;width:211px;height:1px;background:#4a4a4a;"></div>
<span style="left:8.5px;top:216.5px;font-size:11.5px;line-height:15px;color:#6e6e6e;letter-spacing:-0.153px;">persp</span>
<svg style="left:0px;top:219px;" width="5" height="10" viewBox="0 0 5 10"><path d="M4 0v10L-1 5z" fill="#c0c0c0"/></svg>
<span style="left:8.5px;top:236.5px;font-size:11.5px;line-height:15px;color:#6e6e6e;letter-spacing:0.171px;">top</span>
<svg style="left:0px;top:239px;" width="5" height="10" viewBox="0 0 5 10"><path d="M4 0v10L-1 5z" fill="#c0c0c0"/></svg>
<span style="left:8.5px;top:256.5px;font-size:11.5px;line-height:15px;color:#6e6e6e;letter-spacing:0.498px;">front</span>
<svg style="left:0px;top:259px;" width="5" height="10" viewBox="0 0 5 10"><path d="M4 0v10L-1 5z" fill="#c0c0c0"/></svg>
<span style="left:8.5px;top:276.5px;font-size:11.5px;line-height:15px;color:#6e6e6e;letter-spacing:-0.274px;">side</span>
<svg style="left:0px;top:279px;" width="5" height="10" viewBox="0 0 5 10"><path d="M4 0v10L-1 5z" fill="#c0c0c0"/></svg>
<span style="left:8.5px;top:296.5px;font-size:11.5px;line-height:15px;color:#6e6e6e;letter-spacing:-0.296px;">pSphere1</span>
<svg style="left:0px;top:300px;" width="5" height="8" viewBox="0 0 5 8"><path d="M0 1l3 0 2 3-2 3h-3z" fill="#a0a0a0"/></svg>
<span style="left:8.5px;top:316.5px;font-size:11.5px;line-height:15px;color:#d6d6d6;letter-spacing:-0.208px;">aiSkyDomeLight1</span>
<svg style="left:0px;top:316px;" width="4" height="16" viewBox="0 0 4 16"><circle cx="-4" cy="8" r="7" fill="none" stroke="#d8d08a" stroke-width="1.500"/><path d="M-4 5h6M-4 11h6" stroke="#d8d08a"/></svg>
<span style="left:8.5px;top:336.5px;font-size:11.5px;line-height:15px;color:#6e6e6e;letter-spacing:-0.178px;">pSphere1_displacement1</span>
<svg style="left:0px;top:340px;" width="5" height="8" viewBox="0 0 5 8"><path d="M0 1l3 0 2 3-2 3h-3z" fill="#a0a0a0"/></svg>
<span style="left:8.5px;top:356.5px;font-size:11.5px;line-height:15px;color:#d6d6d6;letter-spacing:-0.052px;">yadianna1:yadianna</span>
<svg style="left:0px;top:360px;" width="5" height="8" viewBox="0 0 5 8"><path d="M0 1l3 0 2 3-2 3h-3z" fill="#d0d0d0"/></svg>
<span style="left:8.5px;top:376.5px;font-size:11.5px;line-height:15px;color:#d6d6d6;letter-spacing:-0.315px;">pPlane1</span>
<svg style="left:0px;top:380px;" width="5" height="8" viewBox="0 0 5 8"><path d="M0 1l3 0 2 3-2 3h-3z" fill="#d0d0d0"/></svg>
<span style="left:8.5px;top:396.5px;font-size:11.5px;line-height:15px;color:#d6d6d6;letter-spacing:0.133px;">directionalLight1</span>
<svg style="left:0px;top:397px;" width="4" height="14" viewBox="0 0 4 14"><path d="M0 1h3M0 7h2.500M0 13h3" stroke="#d8c878" stroke-width="2.500"/></svg>
<span style="left:8.5px;top:416.5px;font-size:11.5px;line-height:15px;color:#d6d6d6;letter-spacing:-0.606px;">camera1</span>
<svg style="left:0px;top:419px;" width="5" height="10" viewBox="0 0 5 10"><path d="M4 0v10L-1 5z" fill="#d0d0d0"/></svg>
<span style="left:8.5px;top:436.5px;font-size:11.5px;line-height:15px;color:#d6d6d6;letter-spacing:0.118px;">defaultLightSet</span>
<svg style="left:0px;top:436px;" width="5" height="16" viewBox="0 0 5 16"><circle cx="-4" cy="8" r="7.500" fill="none" stroke="#b8c4cc" stroke-width="1.300"/><path d="M1 4v8" stroke="#b8c4cc" stroke-width="1.300"/></svg>
<span style="left:8.5px;top:456.5px;font-size:11.5px;line-height:15px;color:#d6d6d6;letter-spacing:0.092px;">defaultObjectSet</span>
<svg style="left:0px;top:456px;" width="5" height="16" viewBox="0 0 5 16"><circle cx="-4" cy="8" r="7.500" fill="none" stroke="#b8c4cc" stroke-width="1.300"/><path d="M1 4v8" stroke="#b8c4cc" stroke-width="1.300"/></svg>
<div style="left:200px;top:227px;width:9px;height:640px;background:#5d5d5d;border-radius:3px;"></div>
<svg style="left:199.5px;top:217px;" width="10" height="6" viewBox="0 0 10 6"><path d="M0 6h10l-5-6z" fill="#aaa"/></svg>
<svg style="left:199.5px;top:871px;" width="10" height="6" viewBox="0 0 10 6"><path d="M0 0h10l-5 6z" fill="#ddd"/></svg>
<div style="left:0px;top:883px;width:185px;height:9px;background:#4c4c4c;border-radius:4px;"></div>
<svg style="left:188px;top:882px;" width="6" height="10" viewBox="0 0 6 10"><path d="M0 0v10l6-5z" fill="#ddd"/></svg>
<div style="left:38px;top:894px;width:88px;height:1px;background:transparent;border-top:1px dotted #777;"></div>
<svg style="left:147px;top:345px;" width="22" height="24" viewBox="0 0 22 24"><path d="M1.500 1v15.500l3.800-3.600 2.800 6.400 2.700-1.200-2.800-6.300h5.300z" fill="#fff" stroke="#222" stroke-width="1"/><rect x="11" y="12.500" width="8" height="9" fill="#fff" stroke="#222" stroke-width="0.800"/><path d="M12.500 15h5M12.500 17h5M12.500 19h5" stroke="#222" stroke-width="0.800"/></svg>
<div style="left:212px;top:150px;width:6px;height:750px;background:#383838;"></div>
<div style="left:218px;top:150px;width:1123px;height:750px;background:#444;"></div>
<span style="left:228.4px;top:154.5px;font-size:11.5px;line-height:15px;color:#c8c8c8;letter-spacing:-0.029px;">View</span>
<span style="left:268px;top:154.5px;font-size:11.5px;line-height:15px;color:#c8c8c8;letter-spacing:0.057px;">Shading</span>
<span style="left:326px;top:154.5px;font-size:11.5px;line-height:15px;color:#c8c8c8;letter-spacing:0.302px;">Lighting</span>
<span style="left:384px;top:154.5px;font-size:11.5px;line-height:15px;color:#c8c8c8;letter-spacing:0.184px;">Show</span>
<span style="left:428px;top:154.5px;font-size:11.5px;line-height:15px;color:#c8c8c8;letter-spacing:-0.055px;">Renderer</span>
<span style="left:490px;top:154.5px;font-size:11.5px;line-height:15px;color:#c8c8c8;letter-spacing:-0.393px;">Panels</span>
<svg style="left:222px;top:172px;" width="4" height="19" viewBox="0 0 4 19"><path d="M2 0 L3.300 6 L3.300 13 L2 19 L0.700 13 L0.700 6z" fill="#808080"/></svg>
<svg style="left:366.5px;top:172px;" width="4" height="19" viewBox="0 0 4 19"><path d="M2 0 L3.300 6 L3.300 13 L2 19 L0.700 13 L0.700 6z" fill="#808080"/></svg>
<svg style="left:510px;top:172px;" width="4" height="19" viewBox="0 0 4 19"><path d="M2 0 L3.300 6 L3.300 13 L2 19 L0.700 13 L0.700 6z" fill="#808080"/></svg>
<svg style="left:654px;top:172px;" width="4" height="19" viewBox="0 0 4 19"><path d="M2 0 L3.300 6 L3.300 13 L2 19 L0.700 13 L0.700 6z" fill="#808080"/></svg>
<svg style="left:741px;top:172px;" width="4" height="19" viewBox="0 0 4 19"><path d="M2 0 L3.300 6 L3.300 13 L2 19 L0.700 13 L0.700 6z" fill="#808080"/></svg>
<svg style="left:771.5px;top:172px;" width="4" height="19" viewBox="0 0 4 19"><path d="M2 0 L3.300 6 L3.300 13 L2 19 L0.700 13 L0.700 6z" fill="#808080"/></svg>
<svg style="left:839px;top:172px;" width="4" height="19" viewBox="0 0 4 19"><path d="M2 0 L3.300 6 L3.300 13 L2 19 L0.700 13 L0.700 6z" fill="#808080"/></svg>
<svg style="left:232px;top:173px;" width="16" height="16" viewBox="0 0 16 16"><rect x="0" y="4" width="10" height="8" fill="#dcdcdc"/><path d="M10.500 8l5-4v8z" fill="#dcdcdc"/></svg>
<svg style="left:251px;top:173px;" width="16" height="16" viewBox="0 0 16 16"><rect x="4" y="2" width="8" height="6" fill="#dcdcdc"/><path d="M12 5l4-3v7z" fill="#dcdcdc"/><rect x="0" y="8" width="7" height="7" fill="#4fa3c0"/><path d="M1.500 8v-2a2 2 0 0 1 4 0v2" stroke="#4fa3c0" fill="none" stroke-width="1.300"/></svg>
<svg style="left:270px;top:173px;" width="16" height="16" viewBox="0 0 16 16"><rect x="4" y="2" width="8" height="6" fill="#dcdcdc"/><path d="M12 5l4-3v7z" fill="#dcdcdc"/><circle cx="4.500" cy="11" r="4" fill="none" stroke="#4fa3c0" stroke-width="2"/></svg>
<svg style="left:293px;top:173px;" width="8" height="16" viewBox="0 0 8 16"><path d="M0 1h8v14l-4-4-4 4z" fill="#dcdcdc"/></svg>
<svg style="left:309px;top:173px;" width="15" height="16" viewBox="0 0 15 16"><path d="M9 1v10l-7 4z" fill="#4fa3c0"/><path d="M2 15l7-3.500 5 0-5 3.500z" fill="#dcdcdc"/></svg>
<svg style="left:328px;top:173px;" width="16" height="16" viewBox="0 0 16 16"><path d="M6 0v10M1 5h10M6 0l-2 2.500M6 0l2 2.500M1 5l2.500-2M1 5l2.500 2" stroke="#dcdcdc" stroke-width="1.400" fill="none"/><circle cx="11" cy="10" r="3.300" fill="none" stroke="#4fa3c0" stroke-width="1.600"/><path d="M8.500 12.500l-3 3" stroke="#4fa3c0" stroke-width="1.800"/></svg>
<svg style="left:347px;top:173px;" width="14" height="16" viewBox="0 0 14 16"><path d="M10 0l3 3-8 9-4 2 1-4z" fill="#dcdcdc"/><path d="M8 14c3 1 5-1 4-3" stroke="#dcdcdc" fill="none"/></svg>
<div style="left:374px;top:171px;width:19px;height:20px;background:#5580a2;"></div>
<svg style="left:377px;top:174px;" width="13" height="15" viewBox="0 0 13 15"><rect x="0.500" y="1.500" width="12" height="12" fill="#e8f0f8" stroke="#1b3555"/><path d="M0.500 5.500h12M0.500 9.500h12M4.500 1.500v12M8.500 1.500v12" stroke="#1b3555" stroke-width="1"/></svg>
<svg style="left:396px;top:173px;" width="15" height="16" viewBox="0 0 15 16"><rect x="0.500" y="2.500" width="14" height="11" fill="none" stroke="#dcdcdc"/><path d="M0.500 4.500h14M0.500 11.500h14" stroke="#dcdcdc" stroke-dasharray="1.500 1.500" stroke-width="2"/></svg>
<div style="left:413px;top:171px;width:17.5px;height:20px;background:#5580a2;"></div>
<svg style="left:414.5px;top:173px;" width="15" height="16" viewBox="0 0 15 16"><rect x="0.500" y="2.500" width="14" height="11" fill="#223a50" stroke="#dde8f0"/><circle cx="7.500" cy="8" r="3" fill="#6aa8c0"/></svg>
<div style="left:432px;top:171px;width:17.5px;height:20px;background:#5580a2;"></div>
<svg style="left:433.5px;top:173px;" width="15" height="16" viewBox="0 0 15 16"><rect x="0.500" y="2.500" width="14" height="11" fill="#c8d4e0" stroke="#e8f0f8"/><circle cx="7.500" cy="8" r="3.300" fill="#667" /></svg>
<svg style="left:452px;top:173px;" width="15" height="16" viewBox="0 0 15 16"><rect x="0.500" y="2.500" width="14" height="11" fill="#3a3a3a" stroke="#dcdcdc"/><path d="M4 5.500h7M4 8h7M4 10.500h7" stroke="#4fa3c0" stroke-dasharray="1.500 1"/></svg>
<svg style="left:471px;top:173px;" width="15" height="16" viewBox="0 0 15 16"><rect x="0.500" y="2.500" width="14" height="11" fill="#3a3a3a" stroke="#dcdcdc"/><path d="M3 12l3-5 3 5z" fill="#dcdcdc"/><circle cx="10.500" cy="7" r="2" fill="#dcdcdc"/></svg>
<svg style="left:490px;top:173px;" width="15" height="16" viewBox="0 0 15 16"><rect x="0.500" y="2.500" width="14" height="11" fill="#3a3a3a" stroke="#dcdcdc"/><path d="M4.500 5.500h6M7.500 5.500v6" stroke="#dcdcdc" stroke-width="1.800"/></svg>
<svg style="left:521px;top:173px;" width="14" height="16" viewBox="0 0 14 16"><path d="M7 1l6 3v8l-6 3-6-3v-8z" fill="none" stroke="#dcdcdc" stroke-width="1.200"/><path d="M1 4l6 3 6-3M7 7v8" stroke="#dcdcdc" stroke-width="1.200" fill="none"/></svg>
<div style="left:538.5px;top:171px;width:18px;height:20px;background:#5580a2;"></div>
<svg style="left:540.5px;top:173px;" width="14" height="16" viewBox="0 0 14 16"><path d="M7 1l6 3v8l-6 3-6-3v-8z" fill="#48b4d8" stroke="#e0f0f8" stroke-width="1"/><path d="M1 4l6 3 6-3M7 7v8" stroke="#e0f0f8" stroke-width="1" fill="none"/></svg>
<svg style="left:559px;top:173px;" width="14" height="16" viewBox="0 0 14 16"><circle cx="7" cy="8" r="6.500" fill="#dcdcdc"/><path d="M7 1.500a6.500 6.500 0 0 1 0 13z" fill="#555"/><path d="M8 4h2M10 6h2M8 8h2M10 10h2M8 12h2" stroke="#dcdcdc" stroke-width="1.500"/></svg>
<svg style="left:578px;top:173px;" width="14" height="16" viewBox="0 0 14 16"><path d="M7 1l6 3v8l-6 3-6-3v-8z" fill="none" stroke="#dcdcdc" stroke-width="1.200"/><path d="M1 4l6 3 6-3M7 7v8" stroke="#dcdcdc" stroke-width="1.200" fill="none"/><path d="M4 5.500l3 1.500 3-1.500M7 7v4" stroke="#4fa3c0" fill="none"/></svg>
<svg style="left:597px;top:173px;" width="14" height="16" viewBox="0 0 14 16"><circle cx="7" cy="8" r="6.500" fill="#dcdcdc"/><path d="M2 4h2v2h-2zM6 4h2v2h-2zM10 4h2v2h-2zM4 6h2v2h-2zM8 6h2v2h-2zM12 6h1v2h-1zM2 8h2v2h-2zM6 8h2v2h-2zM10 8h2v2h-2zM4 10h2v2h-2zM8 10h2v2h-2zM6 12h2v2h-2zM4 2h2v2h-2zM8 2h2v2h-2z" fill="#444"/></svg>
<svg style="left:616px;top:173px;" width="15" height="16" viewBox="0 0 15 16"><circle cx="7.500" cy="7" r="3.600" fill="#fff"/><rect x="6" y="10" width="3" height="4" fill="#dcdcdc"/><path d="M7.500 0v2M1 7h2M12 7h2M2.500 2l1.500 1.500M12.500 2l-1.500 1.500" stroke="#dcdcdc" stroke-width="1.200"/></svg>
<svg style="left:634px;top:173px;" width="16" height="16" viewBox="0 0 16 16"><circle cx="10" cy="7" r="5.500" fill="#4fa3c0"/><path d="M0 12l6-4 2 3-6 4z" fill="#dcdcdc"/></svg>
<svg style="left:665px;top:173px;" width="15" height="16" viewBox="0 0 15 16"><circle cx="7.500" cy="6.500" r="5.500" fill="#c8c8c8"/><path d="M2 13h11M3 15h9" stroke="#999" stroke-width="1.200"/></svg>
<svg style="left:684px;top:173px;" width="15" height="16" viewBox="0 0 15 16"><circle cx="5" cy="10" r="4.500" fill="#777"/><circle cx="7.500" cy="7.500" r="4.500" fill="#999"/><circle cx="10" cy="5" r="4.500" fill="#d0d0d0"/></svg>
<svg style="left:703px;top:173px;" width="15" height="16" viewBox="0 0 15 16"><circle cx="7.500" cy="8" r="5.500" fill="none" stroke="#4fa3c0" stroke-width="2.200"/><path d="M7.500 2.500a5.500 5.500 0 0 1 0 11" stroke="#eee" stroke-width="2.200" fill="none" stroke-dasharray="2.200 1.400"/></svg>
<div style="left:720px;top:172px;width:18.5px;height:18px;background:#3a3a3a;border:1px solid #4a4a4a;box-sizing:border-box;"></div>
<svg style="left:752px;top:173px;" width="16" height="16" viewBox="0 0 16 16"><rect x="1" y="1" width="8" height="8" fill="none" stroke="#dcdcdc" stroke-dasharray="2 1.500"/><path d="M8 5v10l2.500-2.300 1.800 3.800 1.700-0.800-1.800-3.700h3.300z" fill="#dcdcdc"/></svg>
<svg style="left:782px;top:173px;" width="14" height="16" viewBox="0 0 14 16"><rect x="4" y="2" width="9" height="9" fill="none" stroke="#dcdcdc" stroke-width="2"/><rect x="1" y="6" width="8" height="8" fill="#dcdcdc"/></svg>
<svg style="left:801px;top:173px;" width="14" height="16" viewBox="0 0 14 16"><rect x="5" y="2" width="8" height="8" fill="none" stroke="#dcdcdc" stroke-width="1.500"/><rect x="1" y="6" width="9" height="9" fill="#dcdcdc"/></svg>
<svg style="left:820px;top:173px;" width="14" height="16" viewBox="0 0 14 16"><rect x="1" y="2" width="12" height="12" fill="none" stroke="#dcdcdc" stroke-width="1.500"/><path d="M4 5l6 6" stroke="#dcdcdc" stroke-width="2.500"/></svg>
<svg style="left:852px;top:173px;" width="13" height="16" viewBox="0 0 13 16"><circle cx="6.500" cy="8" r="6" fill="#dcdcdc"/><circle cx="6.500" cy="8" r="2" fill="#444"/><path d="M6.500 2l2 4M12 6l-4 1M10 13l-2-4M3 13l2-4M1 6l4 1" stroke="#444" stroke-width="1.200"/></svg>
<div style="left:870px;top:174px;width:37px;height:14px;background:#2b2b2b;"></div>
<span style="left:874.5px;top:174.0px;font-size:11.5px;line-height:15px;color:#ddd;letter-spacing:-0.345px;">0.00</span>
<svg style="left:913px;top:173px;" width="11" height="16" viewBox="0 0 11 16"><rect x="1" y="2" width="9" height="12" rx="2" fill="#dcdcdc"/><path d="M1 8a4 4 0 0 1 4-3v6a4 4 0 0 1-4-3z" fill="#444"/></svg>
<div style="left:930px;top:174px;width:38.5px;height:14px;background:#2b2b2b;"></div>
<span style="left:935.5px;top:174.0px;font-size:11.5px;line-height:15px;color:#ddd;letter-spacing:-0.345px;">1.00</span>
<div style="left:970px;top:172px;width:19px;height:19px;background:#5580a2;"></div>
<svg style="left:972px;top:174px;" width="15" height="15" viewBox="0 0 15 15"><circle cx="7.500" cy="7.500" r="6.500" fill="#3aa0cc" stroke="#1a506a"/><text x="7.500" y="10" font-size="6" text-anchor="middle" fill="#0c3040" font-family="Liberation Sans,sans-serif" font-weight="700">ON</text></svg>
<div style="left:991.5px;top:173px;width:163px;height:16.5px;background:#5d5d5d;"></div>
<div style="left:1136px;top:173px;width:1px;height:16.5px;background:#4a4a4a;"></div>
<span style="left:995.5px;top:174.0px;font-size:11.5px;line-height:15px;color:#e0e0e0;letter-spacing:-0.771px;">sRGB gamma</span>
<svg style="left:1140.5px;top:178.5px;" width="10" height="6" viewBox="0 0 10 6"><path d="M0 0h10l-5 6z" fill="#eee"/></svg>
<div style="left:220px;top:190px;width:1119px;height:555px;background:#a9b4ca;background:radial-gradient(ellipse 110px 170px at 25px 20px, rgba(208,210,215,1), rgba(208,210,215,0) 100%),radial-gradient(ellipse 380px 110px at 280px 10px, rgba(158,169,194,0.95), rgba(158,169,194,0) 100%),radial-gradient(ellipse 260px 200px at 1010px 50px, rgba(201,203,208,1), rgba(201,203,208,0) 100%),radial-gradient(ellipse 150px 60px at 1080px 230px, rgba(190,195,205,0.8), rgba(190,195,205,0) 100%),radial-gradient(ellipse 140px 200px at 20px 330px, rgba(168,179,204,0.7), rgba(168,179,204,0) 100%),linear-gradient(180deg,#b4bac6 0px,#b1b9c8 90px,#aab4c9 260px,#a8b3ca 400px,#adb6c8 500px,#b4bac6 555px);"></div>
<svg style="left:220px;top:190px;" width="1119" height="555" viewBox="0 0 1119 555"><defs><filter id="cl" x="0" y="0" width="100%" height="100%"><feTurbulence type="fractalNoise" baseFrequency="0.006 0.012" numOctaves="3" seed="5"/><feColorMatrix type="matrix" values="0 0 0 0 0.86  0 0 0 0 0.87  0 0 0 0 0.89  1.600 0 0 0 -0.620"/></filter><linearGradient id="clg" x1="0" x2="1" y1="0" y2="0"><stop offset="0" stop-color="#fff" stop-opacity="0.150"/><stop offset="0.550" stop-color="#fff" stop-opacity="0.200"/><stop offset="0.800" stop-color="#fff" stop-opacity="1"/></linearGradient><mask id="clm"><rect width="1119" height="555" fill="url(#clg)"/></mask></defs><g mask="url(#clm)"><rect width="1119" height="555" filter="url(#cl)" opacity="0.500"/></g></svg>
<div style="left:220px;top:745px;width:1119px;height:154px;background:#a6a6a7;background:linear-gradient(180deg,#acacad 0,#a6a6a7 10px,#a4a4a5 100%);"></div>
<span style="left:756px;top:198.0px;font-size:10.5px;line-height:14px;color:#2a2a2a;letter-spacing:0.209px;">960 x 540</span>
<span style="left:750px;top:879.0px;font-size:10px;line-height:13px;color:#fff;letter-spacing:0.344px;font-weight:700;">camera1</span>
<svg style="left:234px;top:850px;" width="34" height="28" viewBox="0 0 34 28"><path d="M14 20V6" stroke="#5ec46a" stroke-width="1.300"/><path d="M14 20c5 2 8 1 12-1" stroke="#c03030" stroke-width="1.200" fill="none"/><path d="M14 20c-3-1-5-2-7-4" stroke="#2030b0" stroke-width="1.200" fill="none"/><text x="3" y="17" font-size="9" fill="#2030b0" font-weight="700" font-family="Liberation Sans,sans-serif">z</text><text x="25" y="20" font-size="9" fill="#c03030" font-weight="700" font-family="Liberation Sans,sans-serif">x</text></svg>
<div style="left:1340px;top:150px;width:6px;height:750px;background:#3a3a3a;"></div>
<div style="left:1346px;top:150px;width:382px;height:750px;background:#444;"></div>
<span style="left:1356px;top:154.0px;font-size:11.5px;line-height:15px;color:#d0d0d0;letter-spacing:-0.224px;">List</span>
<span style="left:1388px;top:154.0px;font-size:11.5px;line-height:15px;color:#d0d0d0;letter-spacing:-0.219px;">Selected</span>
<span style="left:1446px;top:154.0px;font-size:11.5px;line-height:15px;color:#d0d0d0;letter-spacing:-0.263px;">Focus</span>
<span style="left:1491px;top:154.0px;font-size:11.5px;line-height:15px;color:#d0d0d0;letter-spacing:0.242px;">Attributes</span>
<span style="left:1609px;top:154.0px;font-size:11.5px;line-height:15px;color:#d0d0d0;letter-spacing:0.059px;">Show</span>
<span style="left:1653px;top:154.0px;font-size:11.5px;line-height:15px;color:#d0d0d0;letter-spacing:0.213px;">Help</span>
<span style="left:1557px;top:154.0px;font-size:11.5px;line-height:15px;color:#4fc24f;letter-spacing:-0.101px;">Display</span>
<svg style="left:1551px;top:152px;" width="50" height="18" viewBox="0 0 50 18"><path d="M6 1.500h-4v15h4M43 1.500h4v15h-4" stroke="#4fc24f" stroke-width="1.600" fill="none"/><path d="M6 0.500h-5v17h5M43 0.500h5v17h-5" stroke="#1a3a1a" stroke-width="0.800" fill="none"/></svg>
<span style="left:1371px;top:194.0px;font-size:11.5px;line-height:15px;color:#c4c4c4;letter-spacing:0.092px;">Make a selection to view attributes</span>
<div style="left:1350px;top:872px;width:148px;height:26px;background:#4a4a4a;"></div>
<div style="left:1500px;top:872px;width:153px;height:26px;background:#5d5d5d;"></div>
<div style="left:1655px;top:872px;width:80px;height:26px;background:#4a4a4a;"></div>
<span style="left:1408px;top:878.5px;font-size:11.5px;line-height:15px;color:#7a7a7a;letter-spacing:-0.327px;">Select</span>
<span style="left:1537px;top:878.5px;font-size:11.5px;line-height:15px;color:#eee;letter-spacing:0.152px;">Load Attributes</span>
<span style="left:1706px;top:878.5px;font-size:11.5px;line-height:15px;color:#7a7a7a;letter-spacing:0.203px;">Copy Tab</span>
<div style="left:306px;top:237px;width:932px;height:611px;background:#444;box-shadow:0 2px 14px 2px rgba(0,0,0,0.35);"></div>
<div style="left:306px;top:237px;width:932px;height:30px;background:#fff;"></div>
<svg style="left:314px;top:244px;" width="15" height="14" viewBox="0 0 15 14"><rect width="15" height="14" rx="1" fill="#8fd3d6"/><path d="M2 11V3l5.500 6 5.500-6v8" stroke="#0f5f78" stroke-width="2.600" fill="none" stroke-linejoin="miter"/></svg>
<span style="left:335.5px;top:243.5px;font-size:13px;line-height:17px;color:#8a8a8a;letter-spacing:-0.016px;">Arnold RenderView</span>
<div style="left:1118px;top:250.5px;width:11px;height:1px;background:#8a8a8a;"></div>
<div style="left:1164px;top:246px;width:10px;height:10px;background:transparent;border:1px solid #8a8a8a;box-sizing:border-box;"></div>
<svg style="left:1209px;top:245px;" width="12" height="12" viewBox="0 0 12 12"><path d="M1 1l10 10M11 1l-10 10" stroke="#8a8a8a" stroke-width="1.100"/></svg>
<span style="left:317.5px;top:271.5px;font-size:11.5px;line-height:15px;color:#d8d8d8;letter-spacing:-0.257px;">File</span>
<span style="left:350px;top:271.5px;font-size:11.5px;line-height:15px;color:#d8d8d8;letter-spacing:0.433px;">Window</span>
<span style="left:409px;top:271.5px;font-size:11.5px;line-height:15px;color:#d8d8d8;letter-spacing:0.071px;">View</span>
<span style="left:449.5px;top:271.5px;font-size:11.5px;line-height:15px;color:#d8d8d8;letter-spacing:-0.203px;">Render</span>
<div style="left:312px;top:293px;width:88px;height:19px;background:#5d5d5d;"></div>
<div style="left:379.5px;top:293px;width:1px;height:19px;background:#4a4a4a;"></div>
<span style="left:315.5px;top:296.0px;font-size:11.5px;line-height:15px;color:#e4e4e4;letter-spacing:-0.300px;">Beauty</span>
<svg style="left:385px;top:300px;" width="10" height="6" viewBox="0 0 10 6"><path d="M0 0h10l-5 6z" fill="#eee"/></svg>
<div style="left:406px;top:293px;width:116px;height:19px;background:#5d5d5d;"></div>
<div style="left:501.5px;top:293px;width:1px;height:19px;background:#4a4a4a;"></div>
<span style="left:409.5px;top:296.0px;font-size:11.5px;line-height:15px;color:#e4e4e4;letter-spacing:-0.374px;">cameraShape1</span>
<svg style="left:507px;top:300px;" width="10" height="6" viewBox="0 0 10 6"><path d="M0 0h10l-5 6z" fill="#eee"/></svg>
<div style="left:527px;top:292px;width:1px;height:22px;background:#383838;"></div>
<div style="left:555px;top:292px;width:1px;height:22px;background:#383838;"></div>
<div style="left:643px;top:292px;width:1px;height:22px;background:#383838;"></div>
<svg style="left:529px;top:292px;" width="22" height="22" viewBox="0 0 22 22"><circle cx="11" cy="11" r="9.500" fill="none" stroke="#c8c8c8" stroke-width="1.500" stroke-dasharray="4 2"/><circle cx="11" cy="11" r="5" fill="#dcdcdc"/></svg>
<svg style="left:561px;top:293px;" width="20" height="20" viewBox="0 0 20 20"><circle cx="10" cy="10" r="9" fill="none" stroke="#c8c8c8" stroke-width="1.200"/><text x="10" y="12.500" font-size="6.500" text-anchor="middle" fill="#c8c8c8" font-family="Liberation Sans,sans-serif">RGB</text></svg>
<div style="left:589px;top:293px;width:20px;height:20px;background:#3a3a3a;"></div>
<svg style="left:591px;top:295px;" width="16" height="16" viewBox="0 0 16 16"><path d="M8 8V0a8 8 0 0 1 8 8zM8 8v8a8 8 0 0 1-8-8z" fill="#e0e0e0"/></svg>
<span style="left:617px;top:294.0px;font-size:14px;line-height:18px;color:#f0f0f0;letter-spacing:-0.578px;font-weight:700;">1:1</span>
<svg style="left:650px;top:294px;" width="18" height="18" viewBox="0 0 18 18"><rect x="3.500" y="3.500" width="11" height="11" fill="#4fa3c0"/><path d="M3.500 0v18M14.500 0v18M0 3.500h18M0 14.500h18" stroke="#e0e0e0" stroke-width="1.200"/></svg>
<svg style="left:675px;top:296px;" width="14" height="14" viewBox="0 0 14 14"><circle cx="7" cy="7" r="6.500" fill="#d8d8d8"/><circle cx="7" cy="7" r="2.200" fill="#444"/><path d="M7 1l2.500 4M13 5l-4.500 1M11 12l-2.500-3.500M3 12l2.500-3.500M1 5l4.500 1" stroke="#444" stroke-width="1.200"/></svg>
<div style="left:692px;top:302.5px;width:50px;height:1.5px;background:#111;"></div>
<div style="left:714.5px;top:296px;width:5px;height:14px;background:#d0d0d0;"></div>
<div style="left:743.5px;top:295.5px;width:34px;height:16px;background:#2b2b2b;"></div>
<span style="left:747.5px;top:296.0px;font-size:11.5px;line-height:15px;color:#e8e8e8;">0</span>
<div style="left:1180px;top:295px;width:12px;height:12px;background:#c83a3a;"></div>
<svg style="left:1198px;top:295px;" width="15" height="14" viewBox="0 0 15 14"><circle cx="1.800" cy="7" r="1.600" fill="#ddd"/><path d="M5 4.500a3.500 3.500 0 0 1 0 5M7.500 2.500a6 6 0 0 1 0 9M10.500 0.500a9 9 0 0 1 0 13" stroke="#ddd" stroke-width="1.300" fill="none"/></svg>
<svg style="left:1218px;top:294px;" width="15" height="15" viewBox="0 0 15 15"><circle cx="7.500" cy="7.500" r="4.300" fill="none" stroke="#e0e0e0" stroke-width="2.600"/><path d="M7.500 0v15M0 7.500h15M2.200 2.200l10.600 10.600M12.800 2.200l-10.600 10.600" stroke="#e0e0e0" stroke-width="2.200" stroke-dasharray="2.200 10.600"/></svg>
<span style="left:314px;top:831.5px;font-size:11.5px;line-height:15px;color:#c8c8c8;letter-spacing:-0.225px;">Rendering | 960x540 (GPU) (1:1) | cameraShape1 | samples 3/2/2/2/2/2</span>
<div style="left:1092.5px;top:833px;width:92px;height:12px;background:#2b2b2b;"></div>
<div style="left:1096px;top:835px;width:20.5px;height:8px;background:#5d8cc0;border-radius:1px;"></div>
<span style="left:1128px;top:831.5px;font-size:11.5px;line-height:15px;color:#e8e8e8;letter-spacing:-0.339px;">24%</span>
<svg style="left:1192px;top:833px;" width="17" height="12" viewBox="0 0 17 12"><rect x="0.500" y="0.500" width="16" height="11" fill="#555" stroke="#777"/><rect x="3" y="3" width="10" height="7" rx="1" fill="#ddd"/><circle cx="8" cy="6.500" r="2.200" fill="#555"/><rect x="9.500" y="1.700" width="3" height="2" fill="#ddd"/></svg>
<svg style="left:1216px;top:832px;" width="20" height="13" viewBox="0 0 20 13"><rect x="0.500" y="0.500" width="19" height="12" fill="#3c3c3c" stroke="#5a5a5a"/><path d="M6 4.500l4 4 4-4" stroke="#ddd" stroke-width="1.300" fill="none"/></svg>
<svg style="left:308px;top:319px;" width="928" height="510" viewBox="308 319 928 510">
<defs>
<filter id="gw" x="0" y="0" width="100%" height="100%" filterUnits="objectBoundingBox" color-interpolation-filters="sRGB">
 <feTurbulence type="fractalNoise" baseFrequency="0.72" numOctaves="1" seed="7" result="t"/>
 <feColorMatrix in="t" type="matrix" values="0 0 0 0 0.86  0 0 0 0 0.90  0 0 0 0 0.84  6 0 0 0 -3.150" result="w"/>
 <feColorMatrix in="t" type="matrix" values="0 0 0 0 0.070  0 0 0 0 0.100  0 0 0 0 0.060  0 7 0 0 -3.450" result="k"/>
 <feMerge result="m"><feMergeNode in="SourceGraphic"/><feMergeNode in="k"/><feMergeNode in="w"/></feMerge>
 <feComposite in="m" in2="SourceGraphic" operator="in"/>
</filter>
<filter id="gg" x="0" y="0" width="100%" height="100%" color-interpolation-filters="sRGB">
 <feTurbulence type="fractalNoise" baseFrequency="0.9" numOctaves="1" seed="11" result="t"/>
 <feColorMatrix in="t" type="matrix" values="0 0 0 0 0.700  0 0 0 0 0.740  0 0 0 0 0.800  4 0 0 0 -2.100" result="w"/>
 <feColorMatrix in="t" type="matrix" values="0 0 0 0 0.520  0 0 0 0 0.560  0 0 0 0 0.650  0 4 0 0 -2.150" result="k"/>
 <feMerge result="m"><feMergeNode in="SourceGraphic"/><feMergeNode in="k"/><feMergeNode in="w"/></feMerge>
 <feComposite in="m" in2="SourceGraphic" operator="in"/>
</filter>
<filter id="rag" x="-5%" y="-5%" width="110%" height="110%">
 <feTurbulence type="fractalNoise" baseFrequency="0.7" numOctaves="1" seed="3" result="t"/>
 <feDisplacementMap in="SourceGraphic" in2="t" scale="3.500" xChannelSelector="R" yChannelSelector="G"/>
</filter>
<linearGradient id="bodyg" x1="0" y1="342" x2="0" y2="829" gradientUnits="userSpaceOnUse">
 <stop offset="0" stop-color="#8e9a8c"/><stop offset="0.180" stop-color="#808f72"/><stop offset="0.300" stop-color="#788d5c"/><stop offset="0.700" stop-color="#6c8450"/><stop offset="1" stop-color="#607a46"/>
</linearGradient>
<linearGradient id="bodyh" x1="680" y1="0" x2="810" y2="0" gradientUnits="userSpaceOnUse">
 <stop offset="0" stop-color="#000" stop-opacity="0"/><stop offset="0.350" stop-color="#a8d058" stop-opacity="0.120"/><stop offset="0.550" stop-color="#000" stop-opacity="0.120"/><stop offset="0.800" stop-color="#000" stop-opacity="0.420"/><stop offset="1" stop-color="#000" stop-opacity="0.500"/>
</linearGradient>
<clipPath id="bodyclip"><polygon points="720,342 724,351 730,361 739,372 740,382 746,388 752,400 753,415 750,430 752,444 765,452 785,460 794,478 797,500 801,530 805,560 806,585 804,602 812,612 816,622 815,633 800,640 790,640 782,632 780,685 787,747 800,810 807,829 695,829 696,772 700,722 695,690 692,635 685,605 686,580 687,567 677,560 660,549 645,546 635,540 631,526 633,515 642,507 650,512 660,525 672,534 677,527 680,505 684,485 690,470 705,458 717,447 712,432 708,418 707,405 712,392 717,385 714,372 714,360 716,348"/></clipPath>
<linearGradient id="shg" x1="782" y1="0" x2="838" y2="0" gradientUnits="userSpaceOnUse"><stop offset="0" stop-color="#849a98"/><stop offset="0.600" stop-color="#a0b2b2"/><stop offset="0.900" stop-color="#c8d4d4"/><stop offset="1" stop-color="#dce4e4"/></linearGradient>
</defs>
<rect x="308" y="319" width="928" height="510" fill="#000"/>
<g filter="url(#rag)">
 <polygon points="308,793 400,790 520,789 680,790 800,792 900,794 1050,796 1236,797 1236,829 308,829" fill="#9ba5b8" filter="url(#gg)"/>
 <g filter="url(#gw)">
  <polygon points="783,642 787,629 800,622 815,632 822,660 832,700 837,747 836,797 830,829 807,829 800,810 787,747 780,685" fill="url(#shg)"/>
 </g>
 <g filter="url(#gw)">
  <polygon points="720,342 724,351 730,361 739,372 740,382 746,388 752,400 753,415 750,430 752,444 765,452 785,460 794,478 797,500 801,530 805,560 806,585 804,602 812,612 816,622 815,633 800,640 790,640 782,632 780,685 787,747 800,810 807,829 695,829 696,772 700,722 695,690 692,635 685,605 686,580 687,567 677,560 660,549 645,546 635,540 631,526 633,515 642,507 650,512 660,525 672,534 677,527 680,505 684,485 690,470 705,458 717,447 712,432 708,418 707,405 712,392 717,385 714,372 714,360 716,348" fill="url(#bodyg)"/>
  <polygon points="720,342 724,351 730,361 739,372 740,382 746,388 752,400 753,415 750,430 752,444 765,452 785,460 794,478 797,500 801,530 805,560 806,585 804,602 812,612 816,622 815,633 800,640 790,640 782,632 780,685 787,747 800,810 807,829 695,829 696,772 700,722 695,690 692,635 685,605 686,580 687,567 677,560 660,549 645,546 635,540 631,526 633,515 642,507 650,512 660,525 672,534 677,527 680,505 684,485 690,470 705,458 717,447 712,432 708,418 707,405 712,392 717,385 714,372 714,360 716,348" fill="url(#bodyh)"/>
  <g clip-path="url(#bodyclip)">
   <polygon points="720,342 724,351 730,361 739,372 740,382 746,388 752,400 753,415 750,430 752,444 765,452 785,460 794,478 797,500 801,530 805,560 806,585 804,602 812,612 816,622 815,633 800,640 790,640 782,632 780,685 787,747 800,810 807,829 695,829 696,772 700,722 695,690 692,635 685,605 686,580 687,567 677,560 660,549 645,546 635,540 631,526 633,515 642,507 650,512 660,525 672,534 677,527 680,505 684,485 690,470 705,458 717,447 712,432 708,418 707,405 712,392 717,385 714,372 714,360 716,348" fill="none" stroke="#b4bebe" stroke-width="10" stroke-opacity="0.600" stroke-linejoin="round"/>
   <polygon points="785,460 794,478 797,500 801,530 805,560 806,585 804,602 812,612 816,622 815,633 800,640 790,640 784,630 783,600 781,570 780,540 778,500" fill="#98a6a6" fill-opacity="0.600"/>
   <path d="M778 566 L781 600 L783 634" stroke="#10160c" stroke-width="3.500" fill="none" stroke-opacity="0.850"/>
   <polygon points="631,500 665,500 676,540 676,562 640,550" fill="#a4aeac" fill-opacity="0.600"/>
  </g>
 </g>
 <g filter="url(#gw)">
  <path d="M612.500 330 L692.500 829" stroke="#c4ccc6" stroke-width="3.400" fill="none"/>
  <polygon points="605,319 621,319 617,334 620,342 613,345 609,336" fill="#c4ccc6"/>
 </g>
</g>
<circle cx="741" cy="472" r="2.200" fill="#fff" opacity="0.900"/>
<circle cx="706" cy="478" r="1.500" fill="#fff" opacity="0.700"/>
</svg>
<div style="left:0px;top:900px;width:1728px;height:180px;background:#444;"></div>
<div style="left:0px;top:908px;width:1528px;height:28px;background:#2b2b2b;"></div>
<div style="left:1516px;top:928px;width:12px;height:8px;background:#222;"></div>
<div style="left:44px;top:922px;width:2px;height:13px;background:#a8a8a8;"></div>
<span style="left:47.450000000000045px;top:907.0px;font-size:11px;line-height:14px;color:#808080;">10</span>
<div style="left:110px;top:922px;width:2px;height:13px;background:#a8a8a8;"></div>
<span style="left:113.97500000000014px;top:907.0px;font-size:11px;line-height:14px;color:#808080;">15</span>
<div style="left:177px;top:922px;width:2px;height:13px;background:#a8a8a8;"></div>
<span style="left:180.5px;top:907.0px;font-size:11px;line-height:14px;color:#808080;">20</span>
<div style="left:244px;top:922px;width:2px;height:13px;background:#a8a8a8;"></div>
<span style="left:247.0250000000001px;top:907.0px;font-size:11px;line-height:14px;color:#808080;">25</span>
<div style="left:310px;top:922px;width:2px;height:13px;background:#a8a8a8;"></div>
<span style="left:313.54999999999995px;top:907.0px;font-size:11px;line-height:14px;color:#808080;">30</span>
<div style="left:377px;top:922px;width:2px;height:13px;background:#a8a8a8;"></div>
<span style="left:380.07500000000005px;top:907.0px;font-size:11px;line-height:14px;color:#808080;">35</span>
<div style="left:443px;top:922px;width:2px;height:13px;background:#a8a8a8;"></div>
<span style="left:446.5999999999999px;top:907.0px;font-size:11px;line-height:14px;color:#808080;">40</span>
<div style="left:510px;top:922px;width:2px;height:13px;background:#a8a8a8;"></div>
<span style="left:513.125px;top:907.0px;font-size:11px;line-height:14px;color:#808080;">45</span>
<div style="left:576px;top:922px;width:2px;height:13px;background:#a8a8a8;"></div>
<span style="left:579.65px;top:907.0px;font-size:11px;line-height:14px;color:#808080;">50</span>
<div style="left:643px;top:922px;width:2px;height:13px;background:#a8a8a8;"></div>
<span style="left:646.1750000000001px;top:907.0px;font-size:11px;line-height:14px;color:#808080;">55</span>
<div style="left:709px;top:922px;width:2px;height:13px;background:#a8a8a8;"></div>
<span style="left:712.7px;top:907.0px;font-size:11px;line-height:14px;color:#808080;">60</span>
<div style="left:776px;top:922px;width:2px;height:13px;background:#a8a8a8;"></div>
<span style="left:779.225px;top:907.0px;font-size:11px;line-height:14px;color:#808080;">65</span>
<div style="left:842px;top:922px;width:2px;height:13px;background:#a8a8a8;"></div>
<span style="left:845.75px;top:907.0px;font-size:11px;line-height:14px;color:#808080;">70</span>
<div style="left:909px;top:922px;width:2px;height:13px;background:#a8a8a8;"></div>
<span style="left:912.275px;top:907.0px;font-size:11px;line-height:14px;color:#808080;">75</span>
<div style="left:975px;top:922px;width:2px;height:13px;background:#a8a8a8;"></div>
<span style="left:978.8px;top:907.0px;font-size:11px;line-height:14px;color:#808080;">80</span>
<div style="left:1042px;top:922px;width:2px;height:13px;background:#a8a8a8;"></div>
<span style="left:1045.325px;top:907.0px;font-size:11px;line-height:14px;color:#808080;">85</span>
<div style="left:1108px;top:922px;width:2px;height:13px;background:#a8a8a8;"></div>
<span style="left:1111.85px;top:907.0px;font-size:11px;line-height:14px;color:#808080;">90</span>
<div style="left:1175px;top:922px;width:2px;height:13px;background:#a8a8a8;"></div>
<span style="left:1178.375px;top:907.0px;font-size:11px;line-height:14px;color:#808080;">95</span>
<div style="left:1241px;top:922px;width:2px;height:13px;background:#a8a8a8;"></div>
<span style="left:1244.9px;top:907.0px;font-size:11px;line-height:14px;color:#808080;">100</span>
<div style="left:1308px;top:922px;width:2px;height:13px;background:#a8a8a8;"></div>
<span style="left:1311.425px;top:907.0px;font-size:11px;line-height:14px;color:#808080;">105</span>
<div style="left:1374px;top:922px;width:2px;height:13px;background:#a8a8a8;"></div>
<span style="left:1377.95px;top:907.0px;font-size:11px;line-height:14px;color:#808080;">110</span>
<div style="left:1441px;top:922px;width:2px;height:13px;background:#a8a8a8;"></div>
<span style="left:1444.475px;top:907.0px;font-size:11px;line-height:14px;color:#808080;">115</span>
<div style="left:1507px;top:922px;width:2px;height:13px;background:#a8a8a8;"></div>
<span style="left:1511.0px;top:907.0px;font-size:11px;line-height:14px;color:#808080;">120</span>
<div style="left:1536px;top:915px;width:88px;height:18px;background:#2b2b2b;"></div>
<span style="left:1542px;top:917.0px;font-size:11.5px;line-height:15px;color:#ddd;">1</span>
<svg style="left:1634px;top:915px;" width="17" height="16" viewBox="0 0 17 16"><rect x="0" y="1" width="2.200" height="14" fill="#d8d8d8"/><path d="M9.500 1v14l-7-7zM16.500 1v14l-7-7z" fill="#d8d8d8"/></svg>
<svg style="left:1659px;top:915px;" width="13" height="16" viewBox="0 0 13 16"><rect x="0" y="1" width="2.200" height="14" fill="#d8d8d8"/><path d="M12.500 1v14l-9.500-7z" fill="#d8d8d8"/></svg>
<svg style="left:1680px;top:913px;" width="16" height="20" viewBox="0 0 16 20"><rect x="1" y="0" width="2.600" height="20" fill="#e08a5a"/><rect x="4" y="3" width="2" height="14" fill="#d8d8d8"/><path d="M15.500 3v14l-9-7z" fill="#d8d8d8"/></svg>
<svg style="left:1704px;top:915px;" width="14" height="16" viewBox="0 0 14 16"><path d="M13.500 0.500v15l-13-7.500z" fill="#d8d8d8"/></svg>
<div style="left:-6px;top:950px;width:14px;height:26px;background:#2b2b2b;border-radius:2px;"></div>
<div style="left:14px;top:950px;width:88px;height:26px;background:#2b2b2b;border-radius:2px;"></div>
<span style="left:20px;top:955.5px;font-size:11.5px;line-height:15px;color:#ddd;">1</span>
<div style="left:109px;top:948px;width:922px;height:29px;background:#3a3a3a;border-radius:3px;"></div>
<div style="left:114px;top:952px;width:557px;height:21px;background:#5d5d5d;border-radius:3px;"></div>
<div style="left:118px;top:955px;width:14px;height:15px;background:#a0a0a0;border-radius:3px;"></div>
<div style="left:652.5px;top:955px;width:14px;height:15px;background:#a0a0a0;border-radius:3px;"></div>
<span style="left:136px;top:955.5px;font-size:11.5px;line-height:15px;color:#ddd;">1</span>
<span style="left:630px;top:955.5px;font-size:11.5px;line-height:15px;color:#ddd;letter-spacing:-0.395px;">120</span>
<div style="left:1036px;top:950px;width:88px;height:26px;background:#2b2b2b;border-radius:2px;"></div>
<span style="left:1041px;top:955.5px;font-size:11.5px;line-height:15px;color:#ddd;letter-spacing:-0.395px;">120</span>
<div style="left:1132px;top:950px;width:88px;height:26px;background:#2b2b2b;border-radius:2px;"></div>
<span style="left:1137px;top:955.5px;font-size:11.5px;line-height:15px;color:#ddd;letter-spacing:-0.062px;">200</span>
<svg style="left:1223px;top:951px;" width="4" height="24" viewBox="0 0 4 24"><path d="M2 0 L3.300 7 L3.300 17 L2 24 L0.700 17 L0.700 7z" fill="#858585"/></svg>
<svg style="left:1267px;top:951px;" width="4" height="24" viewBox="0 0 4 24"><path d="M2 0 L3.300 7 L3.300 17 L2 24 L0.700 17 L0.700 7z" fill="#858585"/></svg>
<svg style="left:1540px;top:951px;" width="4" height="24" viewBox="0 0 4 24"><path d="M2 0 L3.300 7 L3.300 17 L2 24 L0.700 17 L0.700 7z" fill="#858585"/></svg>
<svg style="left:1722px;top:951px;" width="4" height="24" viewBox="0 0 4 24"><path d="M2 0 L3.300 7 L3.300 17 L2 24 L0.700 17 L0.700 7z" fill="#858585"/></svg>
<svg style="left:1236px;top:950px;" width="24" height="23" viewBox="0 0 24 23"><path d="M4 0.500h-3.500v22h3.500M20 0.500h3.500v22h-3.500" stroke="#3fae4f" fill="none" stroke-width="1.200"/><path d="M6 3h10v17l-5-4.500-5 4.500z" fill="#e08050"/><path d="M15 2v8M11 6h8" stroke="#fff" stroke-width="1.800"/></svg>
<svg style="left:1285px;top:959px;" width="9" height="7" viewBox="0 0 9 7"><path d="M0.500 0.500h8l-4 5.500z" fill="none" stroke="#999" stroke-width="1"/></svg>
<div style="left:1302px;top:951px;width:100px;height:24px;background:#444;border:1px solid #3a3a3a;box-sizing:border-box;"></div>
<span style="left:1307px;top:955.5px;font-size:11.5px;line-height:15px;color:#d0d0d0;letter-spacing:-0.178px;">No Character Set</span>
<svg style="left:1413.5px;top:959px;" width="9" height="7" viewBox="0 0 9 7"><path d="M0.500 0.500h8l-4 5.500z" fill="none" stroke="#999" stroke-width="1"/></svg>
<div style="left:1431px;top:951px;width:99px;height:24px;background:#444;border:1px solid #3a3a3a;box-sizing:border-box;"></div>
<span style="left:1436px;top:955.5px;font-size:11.5px;line-height:15px;color:#d0d0d0;letter-spacing:-0.186px;">No Anim Layer</span>
<div style="left:1556px;top:952.5px;width:95px;height:18.5px;background:#5d5d5d;"></div>
<div style="left:1631px;top:952.5px;width:1px;height:18.5px;background:#4a4a4a;"></div>
<span style="left:1559px;top:955.5px;font-size:11.5px;line-height:15px;color:#d0d0d0;letter-spacing:-0.054px;">24 fps</span>
<svg style="left:1636px;top:960px;" width="10" height="6" viewBox="0 0 10 6"><path d="M0 0h10l-5 6z" fill="#eee"/></svg>
<svg style="left:1664px;top:953px;" width="18" height="16" viewBox="0 0 18 16"><path d="M3 9v-2a3 3 0 0 1 3-3h8M15 7v2a3 3 0 0 1-3 3h-8" stroke="#e0e0e0" stroke-width="1.800" fill="none"/><path d="M12.500 0.500l4 3.500-4 3.500zM5.500 8.500l-4 3.500 4 3.500z" fill="#e0e0e0"/></svg>
<div style="left:1690px;top:951px;width:24px;height:23px;background:#5580a2;"></div>
<svg style="left:1693px;top:954px;" width="19" height="17" viewBox="0 0 19 17"><rect x="0.500" y="5" width="17" height="10" fill="#e8c8b8" stroke="#5a2a1a"/><path d="M0.500 8h17M4.500 8v7M9 8v7M13.500 8v7" stroke="#5a2a1a"/><path d="M11 0l6 3-6 3z" fill="#fff"/></svg>
<div style="left:0px;top:987px;width:627px;height:22px;background:#2b2b2b;border-radius:0 2px 2px 0;"></div>
<div style="left:635px;top:987px;width:1100px;height:22px;background:#2b2b2b;border-radius:2px;"></div>
<div style="left:630.5px;top:993px;width:1px;height:1.5px;background:#777;"></div>
<div style="left:630.5px;top:997px;width:1px;height:1.5px;background:#777;"></div>
<div style="left:630.5px;top:1001px;width:1px;height:1.5px;background:#777;"></div>
<span style="left:641px;top:991.0px;font-size:11.5px;line-height:15px;color:#c8c8c8;letter-spacing:0.047px;">// Result: defaultLastHiddenSet</span>
<div style="left:0px;top:1012px;width:1728px;height:1px;background:#505050;"></div>
<div style="left:0px;top:1013px;width:1728px;height:27px;background:#444;"></div>
<span style="left:57.5px;top:1022.5px;font-size:9.5px;line-height:12px;color:#aaa;letter-spacing:0.072px;">o rotate.</span>
<div style="left:0px;top:1013px;width:56px;height:27px;background:#fff;box-shadow:1px 0 4px rgba(0,0,0,0.4);"></div>
<div style="left:0px;top:1013px;width:10px;height:27px;background:#e4e4e4;"></div>
<svg style="left:27px;top:1020px;" width="12" height="12" viewBox="0 0 12 12"><path d="M0.500 0.500l11 11M11.500 0.500l-11 11" stroke="#777" stroke-width="1"/></svg>
<div style="left:0px;top:1040px;width:1728px;height:40px;background:#1f1f20;"></div>
<div style="left:0px;top:1040px;width:296px;height:40px;background:#f2f2f2;"></div>
<span style="left:-4px;top:1051px;font-size:13.700px;line-height:20px;color:#2a2a2a;font-family:'Noto Sans CJK SC','Liberation Sans',sans-serif;">在这里输入你要搜索的内容</span>
<svg style="left:311px;top:1051px;" width="18" height="18" viewBox="0 0 18 18"><circle cx="9" cy="9" r="6.800" fill="none" stroke="#fff" stroke-width="2.200"/></svg>
<svg style="left:358px;top:1052px;" width="18" height="16" viewBox="0 0 18 16"><rect x="1" y="3" width="11" height="10" fill="none" stroke="#fff" stroke-width="1.300"/><path d="M1 0.500h11M1 15.500h11M15.500 3v3M15.500 8v5" stroke="#fff" stroke-width="1.300"/></svg>
<svg style="left:409px;top:1049px;" width="22" height="22" viewBox="0 0 22 22"><path d="M1.500 10C2.500 4 6.500 0.800 11.500 0.800c6 0 9.500 4 9.500 10.200v2.200H8c0.300 3.200 2.600 4.800 6 4.800 2.400 0 4.400-0.600 6.200-1.700v4.200c-2 1.100-4.400 1.600-7.200 1.600C6.500 22.100 2.800 18.300 2.800 12.600c0-3.600 1.800-6.600 4.900-8.200C5 5.200 2.600 7.300 1.500 10zM8.200 9.400h7.600c0-2.700-1.300-4.300-3.700-4.300-2.200 0-3.600 1.700-3.900 4.300z" fill="#1a7fd8"/></svg>
<svg style="left:456px;top:1049px;" width="25" height="22" viewBox="0 0 25 22"><path d="M1 3h8l2 2h13v4H1z" fill="#e6b13a"/><rect x="1" y="6" width="23" height="14" fill="#f7d774"/><rect x="1" y="12" width="23" height="8" fill="#edc95a"/><path d="M7 14h11v7h-3v-4h-5v4h-3z" fill="#5a9ad8"/></svg>
<svg style="left:505px;top:1048px;" width="23" height="24" viewBox="0 0 23 24"><path d="M7 7V5a4.500 4.500 0 0 1 9 0v2" stroke="#e8e8e8" stroke-width="1.500" fill="none"/><rect x="1" y="7" width="21" height="16" fill="#f2f2f2"/><rect x="6" y="10" width="5" height="5" fill="#e8502a"/><rect x="12" y="10" width="5" height="5" fill="#7ab51d"/><rect x="6" y="16" width="5" height="5" fill="#1da0e8"/><rect x="12" y="16" width="5" height="5" fill="#f5b81a"/></svg>
<svg style="left:553px;top:1050px;" width="25" height="20" viewBox="0 0 25 20"><path d="M0.500 7l12-7 12 7v12h-24z" fill="#1e8ae0"/><path d="M0.500 8l12 7 12-7v11h-24z" fill="#3ea2f0"/><path d="M0.500 19l9-7M24.500 19l-9-7" stroke="#1a78c8" stroke-width="1"/></svg>
<svg style="left:602px;top:1048px;" width="26" height="24" viewBox="0 0 26 24"><ellipse cx="13" cy="14" rx="11.500" ry="9" fill="#c8ccd0"/><ellipse cx="13" cy="15" rx="8" ry="6" fill="#888c94"/><ellipse cx="9" cy="8" rx="6" ry="5" fill="#e4e6ea"/><ellipse cx="17" cy="7" rx="4" ry="3.500" fill="#d0d4d8"/><circle cx="12" cy="15" r="3" fill="#e8e8ec"/></svg>
<svg style="left:651px;top:1048px;" width="26" height="24" viewBox="0 0 26 24"><path d="M4 8l8-6 10 3v12l-8 5-10-3z" fill="#b0b4ba"/><path d="M2 10l6-2v10l-6 2z" fill="#8a8e96"/><rect x="13" y="12" width="9" height="8" fill="#5a86c0"/><path d="M10 3l4-3 6 2-3 3z" fill="#d4d6da"/></svg>
<div style="left:689px;top:1040px;width:48px;height:40px;background:#3a3a3c;"></div>
<svg style="left:699px;top:1047px;" width="28" height="27" viewBox="0 0 28 27"><rect width="28" height="27" fill="#9fe0e4"/><path d="M4 21V5l10 11 10-11v16" stroke="#10708c" stroke-width="4.500" fill="none"/><path d="M4 21V5l10 11" stroke="#1a96b0" stroke-width="4.500" fill="none"/><rect x="15" y="22" width="10" height="3" fill="#10708c"/></svg>
<div style="left:448px;top:1077.5px;width:40px;height:2.5px;background:#8ab4dc;"></div>
<div style="left:595px;top:1077.5px;width:40px;height:2.5px;background:#8ab4dc;"></div>
<div style="left:644px;top:1077.5px;width:40px;height:2.5px;background:#8ab4dc;"></div>
<div style="left:689px;top:1077.5px;width:48px;height:2.5px;background:#8ab4dc;"></div>
<svg style="left:1586px;top:1054px;" width="13" height="8" viewBox="0 0 13 8"><path d="M1 7l5.500-5.500 5.500 5.500" stroke="#fff" stroke-width="1.400" fill="none"/></svg>
<svg style="left:1607px;top:1052px;" width="18" height="14" viewBox="0 0 18 14"><rect x="4" y="3.500" width="12" height="7" fill="none" stroke="#fff" stroke-width="1.200"/><rect x="5.500" y="5" width="8" height="4" fill="#fff"/><rect x="16.500" y="5.500" width="1.500" height="3" fill="#fff"/><path d="M0 2h4M0 5h3M2 0v7" stroke="#fff" stroke-width="1.200"/></svg>
<svg style="left:1634px;top:1051px;" width="16" height="16" viewBox="0 0 16 16"><path d="M1 15a14 14 0 0 1 14-14" stroke="#bbb" stroke-width="1.200" fill="none"/><path d="M4.500 15a10.500 10.500 0 0 1 10.500-10.500" stroke="#ddd" stroke-width="1.200" fill="none"/><path d="M8 15a7 7 0 0 1 7-7" stroke="#fff" stroke-width="1.200" fill="none"/><path d="M11.500 15a3.500 3.500 0 0 1 3.500-3.500" stroke="#fff" stroke-width="1.200" fill="none"/><circle cx="14" cy="14.500" r="1.200" fill="#fff"/></svg>
<svg style="left:1655px;top:1052px;" width="18" height="16" viewBox="0 0 18 16"><path d="M1 5.500h3l4-4v13l-4-4h-3z" fill="none" stroke="#fff" stroke-width="1.200"/><path d="M10.500 5.500a3.500 3.500 0 0 1 0 5M12.500 3.500a6 6 0 0 1 0 9M14.500 1.500a9 9 0 0 1 0 13" stroke="#fff" stroke-width="1.100" fill="none"/></svg>
<span style="left:1679px;top:1049px;font-size:15px;line-height:22px;color:#fff;font-weight:700;font-family:'Noto Sans CJK SC','Liberation Sans',sans-serif;">中</span>
<span style="left:1718px;top:1042.5px;font-size:12.5px;line-height:16px;color:#fff;letter-spacing:0.544px;">20:14</span>
<span style="left:1707px;top:1062.5px;font-size:12.5px;line-height:16px;color:#fff;letter-spacing:0.599px;">2020/8/12</span>
</body></html>
